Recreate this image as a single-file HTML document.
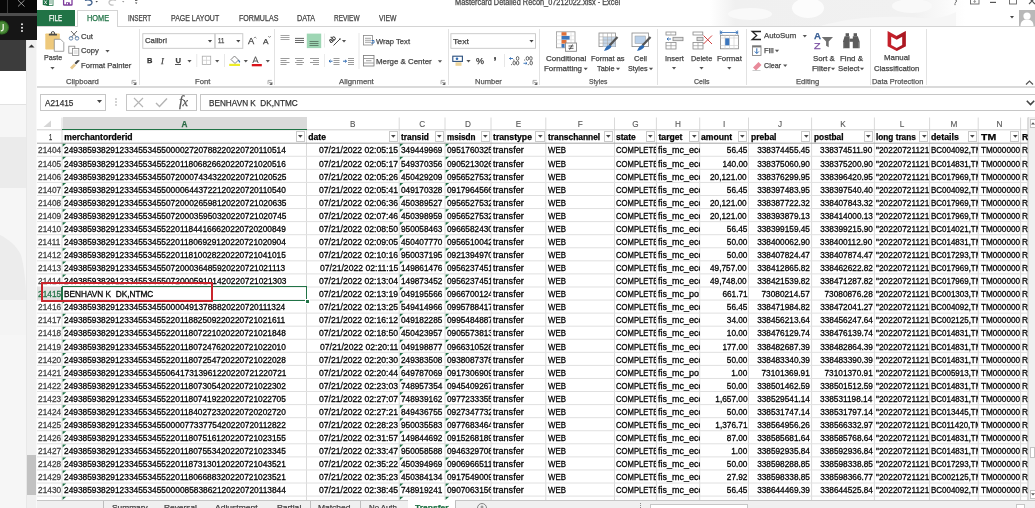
<!DOCTYPE html><html><head><meta charset="utf-8"><style>
html,body{margin:0;padding:0}
body{will-change:transform;width:1035px;height:508px;overflow:hidden;position:relative;background:#fff;font-family:"Liberation Sans",sans-serif}
.t{position:absolute;white-space:nowrap;line-height:1;transform-origin:0 0;-webkit-text-stroke:0.25px currentColor}
.a{position:absolute}
.c{position:absolute;overflow:hidden;height:13.07px}
.c span{position:absolute;white-space:nowrap;line-height:1;font-size:9.4px;transform-origin:0 0;transform:scaleX(0.881);top:2.3px;-webkit-text-stroke:0.3px currentColor}
.c span.r{transform-origin:100% 0;right:0}
</style></head><body>
<svg class="a" style="left:0;top:0" width="1035" height="508"><line x1="62" y1="117.5" x2="62" y2="500.4" stroke="#dadada" stroke-width="1"/><line x1="306.5" y1="117.5" x2="306.5" y2="500.4" stroke="#dadada" stroke-width="1"/><line x1="399.2" y1="117.5" x2="399.2" y2="500.4" stroke="#dadada" stroke-width="1"/><line x1="445" y1="117.5" x2="445" y2="500.4" stroke="#dadada" stroke-width="1"/><line x1="491" y1="117.5" x2="491" y2="500.4" stroke="#dadada" stroke-width="1"/><line x1="545.8" y1="117.5" x2="545.8" y2="500.4" stroke="#dadada" stroke-width="1"/><line x1="614.5" y1="117.5" x2="614.5" y2="500.4" stroke="#dadada" stroke-width="1"/><line x1="656.4" y1="117.5" x2="656.4" y2="500.4" stroke="#dadada" stroke-width="1"/><line x1="699.7" y1="117.5" x2="699.7" y2="500.4" stroke="#dadada" stroke-width="1"/><line x1="748.5" y1="117.5" x2="748.5" y2="500.4" stroke="#dadada" stroke-width="1"/><line x1="811.6" y1="117.5" x2="811.6" y2="500.4" stroke="#dadada" stroke-width="1"/><line x1="874.4" y1="117.5" x2="874.4" y2="500.4" stroke="#dadada" stroke-width="1"/><line x1="929.6" y1="117.5" x2="929.6" y2="500.4" stroke="#dadada" stroke-width="1"/><line x1="978.2" y1="117.5" x2="978.2" y2="500.4" stroke="#dadada" stroke-width="1"/><line x1="1020.6" y1="117.5" x2="1020.6" y2="500.4" stroke="#dadada" stroke-width="1"/><line x1="1027.6" y1="117.5" x2="1027.6" y2="500.4" stroke="#dadada" stroke-width="1"/><line x1="37" y1="129.8" x2="1027.6" y2="129.8" stroke="#d0d0d0"/><line x1="37" y1="143.2" x2="1027.6" y2="143.2" stroke="#a6a6a6"/><line x1="37" y1="156.27" x2="1027.6" y2="156.27" stroke="#e0e0e0"/><line x1="37" y1="169.34" x2="1027.6" y2="169.34" stroke="#e0e0e0"/><line x1="37" y1="182.41" x2="1027.6" y2="182.41" stroke="#e0e0e0"/><line x1="37" y1="195.48" x2="1027.6" y2="195.48" stroke="#e0e0e0"/><line x1="37" y1="208.55" x2="1027.6" y2="208.55" stroke="#e0e0e0"/><line x1="37" y1="221.62" x2="1027.6" y2="221.62" stroke="#e0e0e0"/><line x1="37" y1="234.69" x2="1027.6" y2="234.69" stroke="#e0e0e0"/><line x1="37" y1="247.76" x2="1027.6" y2="247.76" stroke="#e0e0e0"/><line x1="37" y1="260.83" x2="1027.6" y2="260.83" stroke="#e0e0e0"/><line x1="37" y1="273.9" x2="1027.6" y2="273.9" stroke="#e0e0e0"/><line x1="37" y1="286.97" x2="1027.6" y2="286.97" stroke="#e0e0e0"/><line x1="37" y1="300.04" x2="1027.6" y2="300.04" stroke="#e0e0e0"/><line x1="37" y1="313.11" x2="1027.6" y2="313.11" stroke="#e0e0e0"/><line x1="37" y1="326.18" x2="1027.6" y2="326.18" stroke="#e0e0e0"/><line x1="37" y1="339.25" x2="1027.6" y2="339.25" stroke="#e0e0e0"/><line x1="37" y1="352.32" x2="1027.6" y2="352.32" stroke="#e0e0e0"/><line x1="37" y1="365.39" x2="1027.6" y2="365.39" stroke="#e0e0e0"/><line x1="37" y1="378.46" x2="1027.6" y2="378.46" stroke="#e0e0e0"/><line x1="37" y1="391.53" x2="1027.6" y2="391.53" stroke="#e0e0e0"/><line x1="37" y1="404.6" x2="1027.6" y2="404.6" stroke="#e0e0e0"/><line x1="37" y1="417.67" x2="1027.6" y2="417.67" stroke="#e0e0e0"/><line x1="37" y1="430.74" x2="1027.6" y2="430.74" stroke="#e0e0e0"/><line x1="37" y1="443.81" x2="1027.6" y2="443.81" stroke="#e0e0e0"/><line x1="37" y1="456.88" x2="1027.6" y2="456.88" stroke="#e0e0e0"/><line x1="37" y1="469.95" x2="1027.6" y2="469.95" stroke="#e0e0e0"/><line x1="37" y1="483.02" x2="1027.6" y2="483.02" stroke="#e0e0e0"/><line x1="37" y1="496.09" x2="1027.6" y2="496.09" stroke="#e0e0e0"/></svg><div class="c" style="left:62.5px;top:143.2px;width:244px"><span style="left:1.4px;transform:scaleX(0.889)">249385938291233455345500002720788220220720110514</span></div><div class="c" style="left:307px;top:143.2px;width:92.2px"><span class="r" style="right:1.3px;transform:scaleX(0.919)">07/21/2022 02:05:15</span></div><div class="c" style="left:399.7px;top:143.2px;width:45.3px"><span style="left:1.3px">349449969</span></div><div class="c" style="left:445.5px;top:143.2px;width:45.5px"><span style="left:1.3px">0951760325</span></div><div class="c" style="left:491.5px;top:143.2px;width:54.3px"><span style="left:1.4px;transform:scaleX(0.967)">transfer</span></div><div class="c" style="left:546.3px;top:143.2px;width:68.2px"><span style="left:1.4px;transform:scaleX(0.84)">WEB</span></div><div class="c" style="left:615px;top:143.2px;width:41.4px"><span style="left:1.4px;transform:scaleX(0.82)">COMPLETED</span></div><div class="c" style="left:656.9px;top:143.2px;width:42.8px"><span style="left:1.4px;transform:scaleX(0.957)">fis_mc_eco</span></div><div class="c" style="left:700.2px;top:143.2px;width:48.3px"><span class="r" style="right:1.3px">56.45</span></div><div class="c" style="left:749px;top:143.2px;width:62.6px"><span class="r" style="right:1.8px">338374455.45</span></div><div class="c" style="left:812.1px;top:143.2px;width:62.3px"><span class="r" style="right:1.9px">338374511.90</span></div><div class="c" style="left:874.9px;top:143.2px;width:54.7px"><span style="left:1px;letter-spacing:0.05px">&quot;20220721121</span></div><div class="c" style="left:930.1px;top:143.2px;width:48.1px"><span style="left:1.4px;transform:scaleX(0.85)">BC004092,TM</span></div><div class="c" style="left:978.7px;top:143.2px;width:41.9px"><span style="left:2.2px;transform:scaleX(0.87)">TM000000</span></div><div class="c" style="left:1021.1px;top:143.2px;width:6.5px"><span style="left:1.4px">R</span></div><div class="c" style="left:62.5px;top:156.27px;width:244px"><span style="left:1.4px;transform:scaleX(0.889)">249385938291233455345522011806826620220721020516</span></div><div class="c" style="left:307px;top:156.27px;width:92.2px"><span class="r" style="right:1.3px;transform:scaleX(0.919)">07/21/2022 02:05:17</span></div><div class="c" style="left:399.7px;top:156.27px;width:45.3px"><span style="left:1.3px">549370356</span></div><div class="c" style="left:445.5px;top:156.27px;width:45.5px"><span style="left:1.3px">0905213026</span></div><div class="c" style="left:491.5px;top:156.27px;width:54.3px"><span style="left:1.4px;transform:scaleX(0.967)">transfer</span></div><div class="c" style="left:546.3px;top:156.27px;width:68.2px"><span style="left:1.4px;transform:scaleX(0.84)">WEB</span></div><div class="c" style="left:615px;top:156.27px;width:41.4px"><span style="left:1.4px;transform:scaleX(0.82)">COMPLETED</span></div><div class="c" style="left:656.9px;top:156.27px;width:42.8px"><span style="left:1.4px;transform:scaleX(0.957)">fis_mc_eco</span></div><div class="c" style="left:700.2px;top:156.27px;width:48.3px"><span class="r" style="right:1.3px">140.00</span></div><div class="c" style="left:749px;top:156.27px;width:62.6px"><span class="r" style="right:1.8px">338375060.90</span></div><div class="c" style="left:812.1px;top:156.27px;width:62.3px"><span class="r" style="right:1.9px">338375200.90</span></div><div class="c" style="left:874.9px;top:156.27px;width:54.7px"><span style="left:1px;letter-spacing:0.05px">&quot;20220721121</span></div><div class="c" style="left:930.1px;top:156.27px;width:48.1px"><span style="left:1.4px;transform:scaleX(0.85)">BC014831,TM</span></div><div class="c" style="left:978.7px;top:156.27px;width:41.9px"><span style="left:2.2px;transform:scaleX(0.87)">TM000000</span></div><div class="c" style="left:1021.1px;top:156.27px;width:6.5px"><span style="left:1.4px">R</span></div><div class="c" style="left:62.5px;top:169.34px;width:244px"><span style="left:1.4px;transform:scaleX(0.889)">249385938291233455345507200074343220220721020525</span></div><div class="c" style="left:307px;top:169.34px;width:92.2px"><span class="r" style="right:1.3px;transform:scaleX(0.919)">07/21/2022 02:05:26</span></div><div class="c" style="left:399.7px;top:169.34px;width:45.3px"><span style="left:1.3px">450429209</span></div><div class="c" style="left:445.5px;top:169.34px;width:45.5px"><span style="left:1.3px">0956527532</span></div><div class="c" style="left:491.5px;top:169.34px;width:54.3px"><span style="left:1.4px;transform:scaleX(0.967)">transfer</span></div><div class="c" style="left:546.3px;top:169.34px;width:68.2px"><span style="left:1.4px;transform:scaleX(0.84)">WEB</span></div><div class="c" style="left:615px;top:169.34px;width:41.4px"><span style="left:1.4px;transform:scaleX(0.82)">COMPLETED</span></div><div class="c" style="left:656.9px;top:169.34px;width:42.8px"><span style="left:1.4px;transform:scaleX(0.957)">fis_mc_eco</span></div><div class="c" style="left:700.2px;top:169.34px;width:48.3px"><span class="r" style="right:1.3px">20,121.00</span></div><div class="c" style="left:749px;top:169.34px;width:62.6px"><span class="r" style="right:1.8px">338376299.95</span></div><div class="c" style="left:812.1px;top:169.34px;width:62.3px"><span class="r" style="right:1.9px">338396420.95</span></div><div class="c" style="left:874.9px;top:169.34px;width:54.7px"><span style="left:1px;letter-spacing:0.05px">&quot;20220721121</span></div><div class="c" style="left:930.1px;top:169.34px;width:48.1px"><span style="left:1.4px;transform:scaleX(0.85)">BC017969,TM</span></div><div class="c" style="left:978.7px;top:169.34px;width:41.9px"><span style="left:2.2px;transform:scaleX(0.87)">TM000000</span></div><div class="c" style="left:1021.1px;top:169.34px;width:6.5px"><span style="left:1.4px">R</span></div><div class="c" style="left:62.5px;top:182.41px;width:244px"><span style="left:1.4px;transform:scaleX(0.889)">249385938291233455345500006443722120220720110540</span></div><div class="c" style="left:307px;top:182.41px;width:92.2px"><span class="r" style="right:1.3px;transform:scaleX(0.919)">07/21/2022 02:05:41</span></div><div class="c" style="left:399.7px;top:182.41px;width:45.3px"><span style="left:1.3px">049170328</span></div><div class="c" style="left:445.5px;top:182.41px;width:45.5px"><span style="left:1.3px">0917964566</span></div><div class="c" style="left:491.5px;top:182.41px;width:54.3px"><span style="left:1.4px;transform:scaleX(0.967)">transfer</span></div><div class="c" style="left:546.3px;top:182.41px;width:68.2px"><span style="left:1.4px;transform:scaleX(0.84)">WEB</span></div><div class="c" style="left:615px;top:182.41px;width:41.4px"><span style="left:1.4px;transform:scaleX(0.82)">COMPLETED</span></div><div class="c" style="left:656.9px;top:182.41px;width:42.8px"><span style="left:1.4px;transform:scaleX(0.957)">fis_mc_eco</span></div><div class="c" style="left:700.2px;top:182.41px;width:48.3px"><span class="r" style="right:1.3px">56.45</span></div><div class="c" style="left:749px;top:182.41px;width:62.6px"><span class="r" style="right:1.8px">338397483.95</span></div><div class="c" style="left:812.1px;top:182.41px;width:62.3px"><span class="r" style="right:1.9px">338397540.40</span></div><div class="c" style="left:874.9px;top:182.41px;width:54.7px"><span style="left:1px;letter-spacing:0.05px">&quot;20220721121</span></div><div class="c" style="left:930.1px;top:182.41px;width:48.1px"><span style="left:1.4px;transform:scaleX(0.85)">BC004092,TM</span></div><div class="c" style="left:978.7px;top:182.41px;width:41.9px"><span style="left:2.2px;transform:scaleX(0.87)">TM000000</span></div><div class="c" style="left:1021.1px;top:182.41px;width:6.5px"><span style="left:1.4px">R</span></div><div class="c" style="left:62.5px;top:195.48px;width:244px"><span style="left:1.4px;transform:scaleX(0.889)">249385938291233455345507200026598120220721020635</span></div><div class="c" style="left:307px;top:195.48px;width:92.2px"><span class="r" style="right:1.3px;transform:scaleX(0.919)">07/21/2022 02:06:36</span></div><div class="c" style="left:399.7px;top:195.48px;width:45.3px"><span style="left:1.3px">450389527</span></div><div class="c" style="left:445.5px;top:195.48px;width:45.5px"><span style="left:1.3px">0956527532</span></div><div class="c" style="left:491.5px;top:195.48px;width:54.3px"><span style="left:1.4px;transform:scaleX(0.967)">transfer</span></div><div class="c" style="left:546.3px;top:195.48px;width:68.2px"><span style="left:1.4px;transform:scaleX(0.84)">WEB</span></div><div class="c" style="left:615px;top:195.48px;width:41.4px"><span style="left:1.4px;transform:scaleX(0.82)">COMPLETED</span></div><div class="c" style="left:656.9px;top:195.48px;width:42.8px"><span style="left:1.4px;transform:scaleX(0.957)">fis_mc_eco</span></div><div class="c" style="left:700.2px;top:195.48px;width:48.3px"><span class="r" style="right:1.3px">20,121.00</span></div><div class="c" style="left:749px;top:195.48px;width:62.6px"><span class="r" style="right:1.8px">338387722.32</span></div><div class="c" style="left:812.1px;top:195.48px;width:62.3px"><span class="r" style="right:1.9px">338407843.32</span></div><div class="c" style="left:874.9px;top:195.48px;width:54.7px"><span style="left:1px;letter-spacing:0.05px">&quot;20220721121</span></div><div class="c" style="left:930.1px;top:195.48px;width:48.1px"><span style="left:1.4px;transform:scaleX(0.85)">BC017969,TM</span></div><div class="c" style="left:978.7px;top:195.48px;width:41.9px"><span style="left:2.2px;transform:scaleX(0.87)">TM000000</span></div><div class="c" style="left:1021.1px;top:195.48px;width:6.5px"><span style="left:1.4px">R</span></div><div class="c" style="left:62.5px;top:208.55px;width:244px"><span style="left:1.4px;transform:scaleX(0.889)">249385938291233455345507200035950320220721020745</span></div><div class="c" style="left:307px;top:208.55px;width:92.2px"><span class="r" style="right:1.3px;transform:scaleX(0.919)">07/21/2022 02:07:46</span></div><div class="c" style="left:399.7px;top:208.55px;width:45.3px"><span style="left:1.3px">450398959</span></div><div class="c" style="left:445.5px;top:208.55px;width:45.5px"><span style="left:1.3px">0956527532</span></div><div class="c" style="left:491.5px;top:208.55px;width:54.3px"><span style="left:1.4px;transform:scaleX(0.967)">transfer</span></div><div class="c" style="left:546.3px;top:208.55px;width:68.2px"><span style="left:1.4px;transform:scaleX(0.84)">WEB</span></div><div class="c" style="left:615px;top:208.55px;width:41.4px"><span style="left:1.4px;transform:scaleX(0.82)">COMPLETED</span></div><div class="c" style="left:656.9px;top:208.55px;width:42.8px"><span style="left:1.4px;transform:scaleX(0.957)">fis_mc_eco</span></div><div class="c" style="left:700.2px;top:208.55px;width:48.3px"><span class="r" style="right:1.3px">20,121.00</span></div><div class="c" style="left:749px;top:208.55px;width:62.6px"><span class="r" style="right:1.8px">338393879.13</span></div><div class="c" style="left:812.1px;top:208.55px;width:62.3px"><span class="r" style="right:1.9px">338414000.13</span></div><div class="c" style="left:874.9px;top:208.55px;width:54.7px"><span style="left:1px;letter-spacing:0.05px">&quot;20220721121</span></div><div class="c" style="left:930.1px;top:208.55px;width:48.1px"><span style="left:1.4px;transform:scaleX(0.85)">BC017969,TM</span></div><div class="c" style="left:978.7px;top:208.55px;width:41.9px"><span style="left:2.2px;transform:scaleX(0.87)">TM000000</span></div><div class="c" style="left:1021.1px;top:208.55px;width:6.5px"><span style="left:1.4px">R</span></div><div class="c" style="left:62.5px;top:221.62px;width:244px"><span style="left:1.4px;transform:scaleX(0.889)">249385938291233455345522011844166620220720200849</span></div><div class="c" style="left:307px;top:221.62px;width:92.2px"><span class="r" style="right:1.3px;transform:scaleX(0.919)">07/21/2022 02:08:50</span></div><div class="c" style="left:399.7px;top:221.62px;width:45.3px"><span style="left:1.3px">950058463</span></div><div class="c" style="left:445.5px;top:221.62px;width:45.5px"><span style="left:1.3px">0966582430</span></div><div class="c" style="left:491.5px;top:221.62px;width:54.3px"><span style="left:1.4px;transform:scaleX(0.967)">transfer</span></div><div class="c" style="left:546.3px;top:221.62px;width:68.2px"><span style="left:1.4px;transform:scaleX(0.84)">WEB</span></div><div class="c" style="left:615px;top:221.62px;width:41.4px"><span style="left:1.4px;transform:scaleX(0.82)">COMPLETED</span></div><div class="c" style="left:656.9px;top:221.62px;width:42.8px"><span style="left:1.4px;transform:scaleX(0.957)">fis_mc_eco</span></div><div class="c" style="left:700.2px;top:221.62px;width:48.3px"><span class="r" style="right:1.3px">56.45</span></div><div class="c" style="left:749px;top:221.62px;width:62.6px"><span class="r" style="right:1.8px">338399159.45</span></div><div class="c" style="left:812.1px;top:221.62px;width:62.3px"><span class="r" style="right:1.9px">338399215.90</span></div><div class="c" style="left:874.9px;top:221.62px;width:54.7px"><span style="left:1px;letter-spacing:0.05px">&quot;20220721121</span></div><div class="c" style="left:930.1px;top:221.62px;width:48.1px"><span style="left:1.4px;transform:scaleX(0.85)">BC014021,TM</span></div><div class="c" style="left:978.7px;top:221.62px;width:41.9px"><span style="left:2.2px;transform:scaleX(0.87)">TM000000</span></div><div class="c" style="left:1021.1px;top:221.62px;width:6.5px"><span style="left:1.4px">R</span></div><div class="c" style="left:62.5px;top:234.69px;width:244px"><span style="left:1.4px;transform:scaleX(0.889)">249385938291233455345522011806929120220721020904</span></div><div class="c" style="left:307px;top:234.69px;width:92.2px"><span class="r" style="right:1.3px;transform:scaleX(0.919)">07/21/2022 02:09:05</span></div><div class="c" style="left:399.7px;top:234.69px;width:45.3px"><span style="left:1.3px">450407770</span></div><div class="c" style="left:445.5px;top:234.69px;width:45.5px"><span style="left:1.3px">0956510042</span></div><div class="c" style="left:491.5px;top:234.69px;width:54.3px"><span style="left:1.4px;transform:scaleX(0.967)">transfer</span></div><div class="c" style="left:546.3px;top:234.69px;width:68.2px"><span style="left:1.4px;transform:scaleX(0.84)">WEB</span></div><div class="c" style="left:615px;top:234.69px;width:41.4px"><span style="left:1.4px;transform:scaleX(0.82)">COMPLETED</span></div><div class="c" style="left:656.9px;top:234.69px;width:42.8px"><span style="left:1.4px;transform:scaleX(0.957)">fis_mc_eco</span></div><div class="c" style="left:700.2px;top:234.69px;width:48.3px"><span class="r" style="right:1.3px">50.00</span></div><div class="c" style="left:749px;top:234.69px;width:62.6px"><span class="r" style="right:1.8px">338400062.90</span></div><div class="c" style="left:812.1px;top:234.69px;width:62.3px"><span class="r" style="right:1.9px">338400112.90</span></div><div class="c" style="left:874.9px;top:234.69px;width:54.7px"><span style="left:1px;letter-spacing:0.05px">&quot;20220721121</span></div><div class="c" style="left:930.1px;top:234.69px;width:48.1px"><span style="left:1.4px;transform:scaleX(0.85)">BC014831,TM</span></div><div class="c" style="left:978.7px;top:234.69px;width:41.9px"><span style="left:2.2px;transform:scaleX(0.87)">TM000000</span></div><div class="c" style="left:1021.1px;top:234.69px;width:6.5px"><span style="left:1.4px">R</span></div><div class="c" style="left:62.5px;top:247.76px;width:244px"><span style="left:1.4px;transform:scaleX(0.889)">249385938291233455345522011810028220220721041015</span></div><div class="c" style="left:307px;top:247.76px;width:92.2px"><span class="r" style="right:1.3px;transform:scaleX(0.919)">07/21/2022 02:10:16</span></div><div class="c" style="left:399.7px;top:247.76px;width:45.3px"><span style="left:1.3px">950037195</span></div><div class="c" style="left:445.5px;top:247.76px;width:45.5px"><span style="left:1.3px">0921394970</span></div><div class="c" style="left:491.5px;top:247.76px;width:54.3px"><span style="left:1.4px;transform:scaleX(0.967)">transfer</span></div><div class="c" style="left:546.3px;top:247.76px;width:68.2px"><span style="left:1.4px;transform:scaleX(0.84)">WEB</span></div><div class="c" style="left:615px;top:247.76px;width:41.4px"><span style="left:1.4px;transform:scaleX(0.82)">COMPLETED</span></div><div class="c" style="left:656.9px;top:247.76px;width:42.8px"><span style="left:1.4px;transform:scaleX(0.957)">fis_mc_eco</span></div><div class="c" style="left:700.2px;top:247.76px;width:48.3px"><span class="r" style="right:1.3px">50.00</span></div><div class="c" style="left:749px;top:247.76px;width:62.6px"><span class="r" style="right:1.8px">338407824.47</span></div><div class="c" style="left:812.1px;top:247.76px;width:62.3px"><span class="r" style="right:1.9px">338407874.47</span></div><div class="c" style="left:874.9px;top:247.76px;width:54.7px"><span style="left:1px;letter-spacing:0.05px">&quot;20220721121</span></div><div class="c" style="left:930.1px;top:247.76px;width:48.1px"><span style="left:1.4px;transform:scaleX(0.85)">BC017293,TM</span></div><div class="c" style="left:978.7px;top:247.76px;width:41.9px"><span style="left:2.2px;transform:scaleX(0.87)">TM000000</span></div><div class="c" style="left:1021.1px;top:247.76px;width:6.5px"><span style="left:1.4px">R</span></div><div class="c" style="left:62.5px;top:260.83px;width:244px"><span style="left:1.4px;transform:scaleX(0.889)">249385938291233455345507200036485920220721021113</span></div><div class="c" style="left:307px;top:260.83px;width:92.2px"><span class="r" style="right:1.3px;transform:scaleX(0.919)">07/21/2022 02:11:15</span></div><div class="c" style="left:399.7px;top:260.83px;width:45.3px"><span style="left:1.3px">149861476</span></div><div class="c" style="left:445.5px;top:260.83px;width:45.5px"><span style="left:1.3px">0956237451</span></div><div class="c" style="left:491.5px;top:260.83px;width:54.3px"><span style="left:1.4px;transform:scaleX(0.967)">transfer</span></div><div class="c" style="left:546.3px;top:260.83px;width:68.2px"><span style="left:1.4px;transform:scaleX(0.84)">WEB</span></div><div class="c" style="left:615px;top:260.83px;width:41.4px"><span style="left:1.4px;transform:scaleX(0.82)">COMPLETED</span></div><div class="c" style="left:656.9px;top:260.83px;width:42.8px"><span style="left:1.4px;transform:scaleX(0.957)">fis_mc_eco</span></div><div class="c" style="left:700.2px;top:260.83px;width:48.3px"><span class="r" style="right:1.3px">49,757.00</span></div><div class="c" style="left:749px;top:260.83px;width:62.6px"><span class="r" style="right:1.8px">338412865.82</span></div><div class="c" style="left:812.1px;top:260.83px;width:62.3px"><span class="r" style="right:1.9px">338462622.82</span></div><div class="c" style="left:874.9px;top:260.83px;width:54.7px"><span style="left:1px;letter-spacing:0.05px">&quot;20220721121</span></div><div class="c" style="left:930.1px;top:260.83px;width:48.1px"><span style="left:1.4px;transform:scaleX(0.85)">BC017969,TM</span></div><div class="c" style="left:978.7px;top:260.83px;width:41.9px"><span style="left:2.2px;transform:scaleX(0.87)">TM000000</span></div><div class="c" style="left:1021.1px;top:260.83px;width:6.5px"><span style="left:1.4px">R</span></div><div class="c" style="left:62.5px;top:273.9px;width:244px"><span style="left:1.4px;transform:scaleX(0.889)">249385938291233455345507200059101420220721021303</span></div><div class="c" style="left:307px;top:273.9px;width:92.2px"><span class="r" style="right:1.3px;transform:scaleX(0.919)">07/21/2022 02:13:04</span></div><div class="c" style="left:399.7px;top:273.9px;width:45.3px"><span style="left:1.3px">149873452</span></div><div class="c" style="left:445.5px;top:273.9px;width:45.5px"><span style="left:1.3px">0956237451</span></div><div class="c" style="left:491.5px;top:273.9px;width:54.3px"><span style="left:1.4px;transform:scaleX(0.967)">transfer</span></div><div class="c" style="left:546.3px;top:273.9px;width:68.2px"><span style="left:1.4px;transform:scaleX(0.84)">WEB</span></div><div class="c" style="left:615px;top:273.9px;width:41.4px"><span style="left:1.4px;transform:scaleX(0.82)">COMPLETED</span></div><div class="c" style="left:656.9px;top:273.9px;width:42.8px"><span style="left:1.4px;transform:scaleX(0.957)">fis_mc_eco</span></div><div class="c" style="left:700.2px;top:273.9px;width:48.3px"><span class="r" style="right:1.3px">49,748.00</span></div><div class="c" style="left:749px;top:273.9px;width:62.6px"><span class="r" style="right:1.8px">338421539.82</span></div><div class="c" style="left:812.1px;top:273.9px;width:62.3px"><span class="r" style="right:1.9px">338471287.82</span></div><div class="c" style="left:874.9px;top:273.9px;width:54.7px"><span style="left:1px;letter-spacing:0.05px">&quot;20220721121</span></div><div class="c" style="left:930.1px;top:273.9px;width:48.1px"><span style="left:1.4px;transform:scaleX(0.85)">BC017969,TM</span></div><div class="c" style="left:978.7px;top:273.9px;width:41.9px"><span style="left:2.2px;transform:scaleX(0.87)">TM000000</span></div><div class="c" style="left:1021.1px;top:273.9px;width:6.5px"><span style="left:1.4px">R</span></div><div class="c" style="left:62.5px;top:286.97px;width:244px"><span style="left:1.5px;white-space:pre">BENHAVN K  DK,NTMC</span></div><div class="c" style="left:307px;top:286.97px;width:92.2px"><span class="r" style="right:1.3px;transform:scaleX(0.919)">07/21/2022 02:13:19</span></div><div class="c" style="left:399.7px;top:286.97px;width:45.3px"><span style="left:1.3px">049195566</span></div><div class="c" style="left:445.5px;top:286.97px;width:45.5px"><span style="left:1.3px">0966700124</span></div><div class="c" style="left:491.5px;top:286.97px;width:54.3px"><span style="left:1.4px;transform:scaleX(0.967)">transfer</span></div><div class="c" style="left:546.3px;top:286.97px;width:68.2px"><span style="left:1.4px;transform:scaleX(0.84)">WEB</span></div><div class="c" style="left:615px;top:286.97px;width:41.4px"><span style="left:1.4px;transform:scaleX(0.82)">COMPLETED</span></div><div class="c" style="left:656.9px;top:286.97px;width:42.8px"><span style="left:1.4px;transform:scaleX(0.957)">fis_mc_po</span></div><div class="c" style="left:700.2px;top:286.97px;width:48.3px"><span class="r" style="right:1.3px">661.71</span></div><div class="c" style="left:749px;top:286.97px;width:62.6px"><span class="r" style="right:1.8px">73080214.57</span></div><div class="c" style="left:812.1px;top:286.97px;width:62.3px"><span class="r" style="right:1.9px">73080876.28</span></div><div class="c" style="left:874.9px;top:286.97px;width:54.7px"><span style="left:1px;letter-spacing:0.05px">&quot;20220721121</span></div><div class="c" style="left:930.1px;top:286.97px;width:48.1px"><span style="left:1.4px;transform:scaleX(0.85)">BC001303,TM</span></div><div class="c" style="left:978.7px;top:286.97px;width:41.9px"><span style="left:2.2px;transform:scaleX(0.87)">TM000000</span></div><div class="c" style="left:1021.1px;top:286.97px;width:6.5px"><span style="left:1.4px">R</span></div><div class="c" style="left:62.5px;top:300.04px;width:244px"><span style="left:1.4px;transform:scaleX(0.889)">249385938291233455345500004913788820220720111324</span></div><div class="c" style="left:307px;top:300.04px;width:92.2px"><span class="r" style="right:1.3px;transform:scaleX(0.919)">07/21/2022 02:13:25</span></div><div class="c" style="left:399.7px;top:300.04px;width:45.3px"><span style="left:1.3px">549414966</span></div><div class="c" style="left:445.5px;top:300.04px;width:45.5px"><span style="left:1.3px">0995788417</span></div><div class="c" style="left:491.5px;top:300.04px;width:54.3px"><span style="left:1.4px;transform:scaleX(0.967)">transfer</span></div><div class="c" style="left:546.3px;top:300.04px;width:68.2px"><span style="left:1.4px;transform:scaleX(0.84)">WEB</span></div><div class="c" style="left:615px;top:300.04px;width:41.4px"><span style="left:1.4px;transform:scaleX(0.82)">COMPLETED</span></div><div class="c" style="left:656.9px;top:300.04px;width:42.8px"><span style="left:1.4px;transform:scaleX(0.957)">fis_mc_eco</span></div><div class="c" style="left:700.2px;top:300.04px;width:48.3px"><span class="r" style="right:1.3px">56.45</span></div><div class="c" style="left:749px;top:300.04px;width:62.6px"><span class="r" style="right:1.8px">338471984.82</span></div><div class="c" style="left:812.1px;top:300.04px;width:62.3px"><span class="r" style="right:1.9px">338472041.27</span></div><div class="c" style="left:874.9px;top:300.04px;width:54.7px"><span style="left:1px;letter-spacing:0.05px">&quot;20220721121</span></div><div class="c" style="left:930.1px;top:300.04px;width:48.1px"><span style="left:1.4px;transform:scaleX(0.85)">BC004092,TM</span></div><div class="c" style="left:978.7px;top:300.04px;width:41.9px"><span style="left:2.2px;transform:scaleX(0.87)">TM000000</span></div><div class="c" style="left:1021.1px;top:300.04px;width:6.5px"><span style="left:1.4px">R</span></div><div class="c" style="left:62.5px;top:313.11px;width:244px"><span style="left:1.4px;transform:scaleX(0.889)">249385938291233455345522011882509220220721021611</span></div><div class="c" style="left:307px;top:313.11px;width:92.2px"><span class="r" style="right:1.3px;transform:scaleX(0.919)">07/21/2022 02:16:12</span></div><div class="c" style="left:399.7px;top:313.11px;width:45.3px"><span style="left:1.3px">049182285</span></div><div class="c" style="left:445.5px;top:313.11px;width:45.5px"><span style="left:1.3px">0995484887</span></div><div class="c" style="left:491.5px;top:313.11px;width:54.3px"><span style="left:1.4px;transform:scaleX(0.967)">transfer</span></div><div class="c" style="left:546.3px;top:313.11px;width:68.2px"><span style="left:1.4px;transform:scaleX(0.84)">WEB</span></div><div class="c" style="left:615px;top:313.11px;width:41.4px"><span style="left:1.4px;transform:scaleX(0.82)">COMPLETED</span></div><div class="c" style="left:656.9px;top:313.11px;width:42.8px"><span style="left:1.4px;transform:scaleX(0.957)">fis_mc_eco</span></div><div class="c" style="left:700.2px;top:313.11px;width:48.3px"><span class="r" style="right:1.3px">34.00</span></div><div class="c" style="left:749px;top:313.11px;width:62.6px"><span class="r" style="right:1.8px">338456213.64</span></div><div class="c" style="left:812.1px;top:313.11px;width:62.3px"><span class="r" style="right:1.9px">338456247.64</span></div><div class="c" style="left:874.9px;top:313.11px;width:54.7px"><span style="left:1px;letter-spacing:0.05px">&quot;20220721121</span></div><div class="c" style="left:930.1px;top:313.11px;width:48.1px"><span style="left:1.4px;transform:scaleX(0.85)">BC002125,TM</span></div><div class="c" style="left:978.7px;top:313.11px;width:41.9px"><span style="left:2.2px;transform:scaleX(0.87)">TM000000</span></div><div class="c" style="left:1021.1px;top:313.11px;width:6.5px"><span style="left:1.4px">R</span></div><div class="c" style="left:62.5px;top:326.18px;width:244px"><span style="left:1.4px;transform:scaleX(0.889)">249385938291233455345522011807221020220721021848</span></div><div class="c" style="left:307px;top:326.18px;width:92.2px"><span class="r" style="right:1.3px;transform:scaleX(0.919)">07/21/2022 02:18:50</span></div><div class="c" style="left:399.7px;top:326.18px;width:45.3px"><span style="left:1.3px">450423957</span></div><div class="c" style="left:445.5px;top:326.18px;width:45.5px"><span style="left:1.3px">0905573813</span></div><div class="c" style="left:491.5px;top:326.18px;width:54.3px"><span style="left:1.4px;transform:scaleX(0.967)">transfer</span></div><div class="c" style="left:546.3px;top:326.18px;width:68.2px"><span style="left:1.4px;transform:scaleX(0.84)">WEB</span></div><div class="c" style="left:615px;top:326.18px;width:41.4px"><span style="left:1.4px;transform:scaleX(0.82)">COMPLETED</span></div><div class="c" style="left:656.9px;top:326.18px;width:42.8px"><span style="left:1.4px;transform:scaleX(0.957)">fis_mc_eco</span></div><div class="c" style="left:700.2px;top:326.18px;width:48.3px"><span class="r" style="right:1.3px">10.00</span></div><div class="c" style="left:749px;top:326.18px;width:62.6px"><span class="r" style="right:1.8px">338476129.74</span></div><div class="c" style="left:812.1px;top:326.18px;width:62.3px"><span class="r" style="right:1.9px">338476139.74</span></div><div class="c" style="left:874.9px;top:326.18px;width:54.7px"><span style="left:1px;letter-spacing:0.05px">&quot;20220721121</span></div><div class="c" style="left:930.1px;top:326.18px;width:48.1px"><span style="left:1.4px;transform:scaleX(0.85)">BC014831,TM</span></div><div class="c" style="left:978.7px;top:326.18px;width:41.9px"><span style="left:2.2px;transform:scaleX(0.87)">TM000000</span></div><div class="c" style="left:1021.1px;top:326.18px;width:6.5px"><span style="left:1.4px">R</span></div><div class="c" style="left:62.5px;top:339.25px;width:244px"><span style="left:1.4px;transform:scaleX(0.889)">249385938291233455345522011807247620220721022010</span></div><div class="c" style="left:307px;top:339.25px;width:92.2px"><span class="r" style="right:1.3px;transform:scaleX(0.919)">07/21/2022 02:20:11</span></div><div class="c" style="left:399.7px;top:339.25px;width:45.3px"><span style="left:1.3px">049198877</span></div><div class="c" style="left:445.5px;top:339.25px;width:45.5px"><span style="left:1.3px">0966310528</span></div><div class="c" style="left:491.5px;top:339.25px;width:54.3px"><span style="left:1.4px;transform:scaleX(0.967)">transfer</span></div><div class="c" style="left:546.3px;top:339.25px;width:68.2px"><span style="left:1.4px;transform:scaleX(0.84)">WEB</span></div><div class="c" style="left:615px;top:339.25px;width:41.4px"><span style="left:1.4px;transform:scaleX(0.82)">COMPLETED</span></div><div class="c" style="left:656.9px;top:339.25px;width:42.8px"><span style="left:1.4px;transform:scaleX(0.957)">fis_mc_eco</span></div><div class="c" style="left:700.2px;top:339.25px;width:48.3px"><span class="r" style="right:1.3px">177.00</span></div><div class="c" style="left:749px;top:339.25px;width:62.6px"><span class="r" style="right:1.8px">338482687.39</span></div><div class="c" style="left:812.1px;top:339.25px;width:62.3px"><span class="r" style="right:1.9px">338482864.39</span></div><div class="c" style="left:874.9px;top:339.25px;width:54.7px"><span style="left:1px;letter-spacing:0.05px">&quot;20220721121</span></div><div class="c" style="left:930.1px;top:339.25px;width:48.1px"><span style="left:1.4px;transform:scaleX(0.85)">BC014831,TM</span></div><div class="c" style="left:978.7px;top:339.25px;width:41.9px"><span style="left:2.2px;transform:scaleX(0.87)">TM000000</span></div><div class="c" style="left:1021.1px;top:339.25px;width:6.5px"><span style="left:1.4px">R</span></div><div class="c" style="left:62.5px;top:352.32px;width:244px"><span style="left:1.4px;transform:scaleX(0.889)">249385938291233455345522011807254720220721022028</span></div><div class="c" style="left:307px;top:352.32px;width:92.2px"><span class="r" style="right:1.3px;transform:scaleX(0.919)">07/21/2022 02:20:30</span></div><div class="c" style="left:399.7px;top:352.32px;width:45.3px"><span style="left:1.3px">249383508</span></div><div class="c" style="left:445.5px;top:352.32px;width:45.5px"><span style="left:1.3px">0938087378</span></div><div class="c" style="left:491.5px;top:352.32px;width:54.3px"><span style="left:1.4px;transform:scaleX(0.967)">transfer</span></div><div class="c" style="left:546.3px;top:352.32px;width:68.2px"><span style="left:1.4px;transform:scaleX(0.84)">WEB</span></div><div class="c" style="left:615px;top:352.32px;width:41.4px"><span style="left:1.4px;transform:scaleX(0.82)">COMPLETED</span></div><div class="c" style="left:656.9px;top:352.32px;width:42.8px"><span style="left:1.4px;transform:scaleX(0.957)">fis_mc_eco</span></div><div class="c" style="left:700.2px;top:352.32px;width:48.3px"><span class="r" style="right:1.3px">50.00</span></div><div class="c" style="left:749px;top:352.32px;width:62.6px"><span class="r" style="right:1.8px">338483340.39</span></div><div class="c" style="left:812.1px;top:352.32px;width:62.3px"><span class="r" style="right:1.9px">338483390.39</span></div><div class="c" style="left:874.9px;top:352.32px;width:54.7px"><span style="left:1px;letter-spacing:0.05px">&quot;20220721121</span></div><div class="c" style="left:930.1px;top:352.32px;width:48.1px"><span style="left:1.4px;transform:scaleX(0.85)">BC014831,TM</span></div><div class="c" style="left:978.7px;top:352.32px;width:41.9px"><span style="left:2.2px;transform:scaleX(0.87)">TM000000</span></div><div class="c" style="left:1021.1px;top:352.32px;width:6.5px"><span style="left:1.4px">R</span></div><div class="c" style="left:62.5px;top:365.39px;width:244px"><span style="left:1.4px;transform:scaleX(0.889)">249385938291233455345506417313961220220721220721</span></div><div class="c" style="left:307px;top:365.39px;width:92.2px"><span class="r" style="right:1.3px;transform:scaleX(0.919)">07/21/2022 02:20:44</span></div><div class="c" style="left:399.7px;top:365.39px;width:45.3px"><span style="left:1.3px">649787069</span></div><div class="c" style="left:445.5px;top:365.39px;width:45.5px"><span style="left:1.3px">0917306909</span></div><div class="c" style="left:491.5px;top:365.39px;width:54.3px"><span style="left:1.4px;transform:scaleX(0.967)">transfer</span></div><div class="c" style="left:546.3px;top:365.39px;width:68.2px"><span style="left:1.4px;transform:scaleX(0.84)">WEB</span></div><div class="c" style="left:615px;top:365.39px;width:41.4px"><span style="left:1.4px;transform:scaleX(0.82)">COMPLETED</span></div><div class="c" style="left:656.9px;top:365.39px;width:42.8px"><span style="left:1.4px;transform:scaleX(0.957)">fis_mc_po</span></div><div class="c" style="left:700.2px;top:365.39px;width:48.3px"><span class="r" style="right:1.3px">1.00</span></div><div class="c" style="left:749px;top:365.39px;width:62.6px"><span class="r" style="right:1.8px">73101369.91</span></div><div class="c" style="left:812.1px;top:365.39px;width:62.3px"><span class="r" style="right:1.9px">73101370.91</span></div><div class="c" style="left:874.9px;top:365.39px;width:54.7px"><span style="left:1px;letter-spacing:0.05px">&quot;20220721121</span></div><div class="c" style="left:930.1px;top:365.39px;width:48.1px"><span style="left:1.4px;transform:scaleX(0.85)">BC005913,TM</span></div><div class="c" style="left:978.7px;top:365.39px;width:41.9px"><span style="left:2.2px;transform:scaleX(0.87)">TM000000</span></div><div class="c" style="left:1021.1px;top:365.39px;width:6.5px"><span style="left:1.4px">R</span></div><div class="c" style="left:62.5px;top:378.46px;width:244px"><span style="left:1.4px;transform:scaleX(0.889)">249385938291233455345522011807305420220721022302</span></div><div class="c" style="left:307px;top:378.46px;width:92.2px"><span class="r" style="right:1.3px;transform:scaleX(0.919)">07/21/2022 02:23:03</span></div><div class="c" style="left:399.7px;top:378.46px;width:45.3px"><span style="left:1.3px">748957354</span></div><div class="c" style="left:445.5px;top:378.46px;width:45.5px"><span style="left:1.3px">0945409267</span></div><div class="c" style="left:491.5px;top:378.46px;width:54.3px"><span style="left:1.4px;transform:scaleX(0.967)">transfer</span></div><div class="c" style="left:546.3px;top:378.46px;width:68.2px"><span style="left:1.4px;transform:scaleX(0.84)">WEB</span></div><div class="c" style="left:615px;top:378.46px;width:41.4px"><span style="left:1.4px;transform:scaleX(0.82)">COMPLETED</span></div><div class="c" style="left:656.9px;top:378.46px;width:42.8px"><span style="left:1.4px;transform:scaleX(0.957)">fis_mc_eco</span></div><div class="c" style="left:700.2px;top:378.46px;width:48.3px"><span class="r" style="right:1.3px">50.00</span></div><div class="c" style="left:749px;top:378.46px;width:62.6px"><span class="r" style="right:1.8px">338501462.59</span></div><div class="c" style="left:812.1px;top:378.46px;width:62.3px"><span class="r" style="right:1.9px">338501512.59</span></div><div class="c" style="left:874.9px;top:378.46px;width:54.7px"><span style="left:1px;letter-spacing:0.05px">&quot;20220721121</span></div><div class="c" style="left:930.1px;top:378.46px;width:48.1px"><span style="left:1.4px;transform:scaleX(0.85)">BC014831,TM</span></div><div class="c" style="left:978.7px;top:378.46px;width:41.9px"><span style="left:2.2px;transform:scaleX(0.87)">TM000000</span></div><div class="c" style="left:1021.1px;top:378.46px;width:6.5px"><span style="left:1.4px">R</span></div><div class="c" style="left:62.5px;top:391.53px;width:244px"><span style="left:1.4px;transform:scaleX(0.889)">249385938291233455345522011807419220220721022705</span></div><div class="c" style="left:307px;top:391.53px;width:92.2px"><span class="r" style="right:1.3px;transform:scaleX(0.919)">07/21/2022 02:27:07</span></div><div class="c" style="left:399.7px;top:391.53px;width:45.3px"><span style="left:1.3px">748939162</span></div><div class="c" style="left:445.5px;top:391.53px;width:45.5px"><span style="left:1.3px">0977233355</span></div><div class="c" style="left:491.5px;top:391.53px;width:54.3px"><span style="left:1.4px;transform:scaleX(0.967)">transfer</span></div><div class="c" style="left:546.3px;top:391.53px;width:68.2px"><span style="left:1.4px;transform:scaleX(0.84)">WEB</span></div><div class="c" style="left:615px;top:391.53px;width:41.4px"><span style="left:1.4px;transform:scaleX(0.82)">COMPLETED</span></div><div class="c" style="left:656.9px;top:391.53px;width:42.8px"><span style="left:1.4px;transform:scaleX(0.957)">fis_mc_eco</span></div><div class="c" style="left:700.2px;top:391.53px;width:48.3px"><span class="r" style="right:1.3px">1,657.00</span></div><div class="c" style="left:749px;top:391.53px;width:62.6px"><span class="r" style="right:1.8px">338529541.14</span></div><div class="c" style="left:812.1px;top:391.53px;width:62.3px"><span class="r" style="right:1.9px">338531198.14</span></div><div class="c" style="left:874.9px;top:391.53px;width:54.7px"><span style="left:1px;letter-spacing:0.05px">&quot;20220721121</span></div><div class="c" style="left:930.1px;top:391.53px;width:48.1px"><span style="left:1.4px;transform:scaleX(0.85)">BC014831,TM</span></div><div class="c" style="left:978.7px;top:391.53px;width:41.9px"><span style="left:2.2px;transform:scaleX(0.87)">TM000000</span></div><div class="c" style="left:1021.1px;top:391.53px;width:6.5px"><span style="left:1.4px">R</span></div><div class="c" style="left:62.5px;top:404.6px;width:244px"><span style="left:1.4px;transform:scaleX(0.889)">249385938291233455345522011840272320220720202720</span></div><div class="c" style="left:307px;top:404.6px;width:92.2px"><span class="r" style="right:1.3px;transform:scaleX(0.919)">07/21/2022 02:27:21</span></div><div class="c" style="left:399.7px;top:404.6px;width:45.3px"><span style="left:1.3px">849436755</span></div><div class="c" style="left:445.5px;top:404.6px;width:45.5px"><span style="left:1.3px">0927347732</span></div><div class="c" style="left:491.5px;top:404.6px;width:54.3px"><span style="left:1.4px;transform:scaleX(0.967)">transfer</span></div><div class="c" style="left:546.3px;top:404.6px;width:68.2px"><span style="left:1.4px;transform:scaleX(0.84)">WEB</span></div><div class="c" style="left:615px;top:404.6px;width:41.4px"><span style="left:1.4px;transform:scaleX(0.82)">COMPLETED</span></div><div class="c" style="left:656.9px;top:404.6px;width:42.8px"><span style="left:1.4px;transform:scaleX(0.957)">fis_mc_eco</span></div><div class="c" style="left:700.2px;top:404.6px;width:48.3px"><span class="r" style="right:1.3px">50.00</span></div><div class="c" style="left:749px;top:404.6px;width:62.6px"><span class="r" style="right:1.8px">338531747.14</span></div><div class="c" style="left:812.1px;top:404.6px;width:62.3px"><span class="r" style="right:1.9px">338531797.14</span></div><div class="c" style="left:874.9px;top:404.6px;width:54.7px"><span style="left:1px;letter-spacing:0.05px">&quot;20220721121</span></div><div class="c" style="left:930.1px;top:404.6px;width:48.1px"><span style="left:1.4px;transform:scaleX(0.85)">BC013445,TM</span></div><div class="c" style="left:978.7px;top:404.6px;width:41.9px"><span style="left:2.2px;transform:scaleX(0.87)">TM000000</span></div><div class="c" style="left:1021.1px;top:404.6px;width:6.5px"><span style="left:1.4px">R</span></div><div class="c" style="left:62.5px;top:417.67px;width:244px"><span style="left:1.4px;transform:scaleX(0.889)">249385938291233455345500007733775420220720112822</span></div><div class="c" style="left:307px;top:417.67px;width:92.2px"><span class="r" style="right:1.3px;transform:scaleX(0.919)">07/21/2022 02:28:23</span></div><div class="c" style="left:399.7px;top:417.67px;width:45.3px"><span style="left:1.3px">950035583</span></div><div class="c" style="left:445.5px;top:417.67px;width:45.5px"><span style="left:1.3px">0977683464</span></div><div class="c" style="left:491.5px;top:417.67px;width:54.3px"><span style="left:1.4px;transform:scaleX(0.967)">transfer</span></div><div class="c" style="left:546.3px;top:417.67px;width:68.2px"><span style="left:1.4px;transform:scaleX(0.84)">WEB</span></div><div class="c" style="left:615px;top:417.67px;width:41.4px"><span style="left:1.4px;transform:scaleX(0.82)">COMPLETED</span></div><div class="c" style="left:656.9px;top:417.67px;width:42.8px"><span style="left:1.4px;transform:scaleX(0.957)">fis_mc_eco</span></div><div class="c" style="left:700.2px;top:417.67px;width:48.3px"><span class="r" style="right:1.3px">1,376.71</span></div><div class="c" style="left:749px;top:417.67px;width:62.6px"><span class="r" style="right:1.8px">338564956.26</span></div><div class="c" style="left:812.1px;top:417.67px;width:62.3px"><span class="r" style="right:1.9px">338566332.97</span></div><div class="c" style="left:874.9px;top:417.67px;width:54.7px"><span style="left:1px;letter-spacing:0.05px">&quot;20220721121</span></div><div class="c" style="left:930.1px;top:417.67px;width:48.1px"><span style="left:1.4px;transform:scaleX(0.85)">BC011420,TM</span></div><div class="c" style="left:978.7px;top:417.67px;width:41.9px"><span style="left:2.2px;transform:scaleX(0.87)">TM000000</span></div><div class="c" style="left:1021.1px;top:417.67px;width:6.5px"><span style="left:1.4px">R</span></div><div class="c" style="left:62.5px;top:430.74px;width:244px"><span style="left:1.4px;transform:scaleX(0.889)">249385938291233455345522011807516120220721023155</span></div><div class="c" style="left:307px;top:430.74px;width:92.2px"><span class="r" style="right:1.3px;transform:scaleX(0.919)">07/21/2022 02:31:57</span></div><div class="c" style="left:399.7px;top:430.74px;width:45.3px"><span style="left:1.3px">149844692</span></div><div class="c" style="left:445.5px;top:430.74px;width:45.5px"><span style="left:1.3px">0915268189</span></div><div class="c" style="left:491.5px;top:430.74px;width:54.3px"><span style="left:1.4px;transform:scaleX(0.967)">transfer</span></div><div class="c" style="left:546.3px;top:430.74px;width:68.2px"><span style="left:1.4px;transform:scaleX(0.84)">WEB</span></div><div class="c" style="left:615px;top:430.74px;width:41.4px"><span style="left:1.4px;transform:scaleX(0.82)">COMPLETED</span></div><div class="c" style="left:656.9px;top:430.74px;width:42.8px"><span style="left:1.4px;transform:scaleX(0.957)">fis_mc_eco</span></div><div class="c" style="left:700.2px;top:430.74px;width:48.3px"><span class="r" style="right:1.3px">87.00</span></div><div class="c" style="left:749px;top:430.74px;width:62.6px"><span class="r" style="right:1.8px">338585681.64</span></div><div class="c" style="left:812.1px;top:430.74px;width:62.3px"><span class="r" style="right:1.9px">338585768.64</span></div><div class="c" style="left:874.9px;top:430.74px;width:54.7px"><span style="left:1px;letter-spacing:0.05px">&quot;20220721121</span></div><div class="c" style="left:930.1px;top:430.74px;width:48.1px"><span style="left:1.4px;transform:scaleX(0.85)">BC014831,TM</span></div><div class="c" style="left:978.7px;top:430.74px;width:41.9px"><span style="left:2.2px;transform:scaleX(0.87)">TM000000</span></div><div class="c" style="left:1021.1px;top:430.74px;width:6.5px"><span style="left:1.4px">R</span></div><div class="c" style="left:62.5px;top:443.81px;width:244px"><span style="left:1.4px;transform:scaleX(0.889)">249385938291233455345522011807553420220721023345</span></div><div class="c" style="left:307px;top:443.81px;width:92.2px"><span class="r" style="right:1.3px;transform:scaleX(0.919)">07/21/2022 02:33:47</span></div><div class="c" style="left:399.7px;top:443.81px;width:45.3px"><span style="left:1.3px">950058588</span></div><div class="c" style="left:445.5px;top:443.81px;width:45.5px"><span style="left:1.3px">0946329708</span></div><div class="c" style="left:491.5px;top:443.81px;width:54.3px"><span style="left:1.4px;transform:scaleX(0.967)">transfer</span></div><div class="c" style="left:546.3px;top:443.81px;width:68.2px"><span style="left:1.4px;transform:scaleX(0.84)">WEB</span></div><div class="c" style="left:615px;top:443.81px;width:41.4px"><span style="left:1.4px;transform:scaleX(0.82)">COMPLETED</span></div><div class="c" style="left:656.9px;top:443.81px;width:42.8px"><span style="left:1.4px;transform:scaleX(0.957)">fis_mc_eco</span></div><div class="c" style="left:700.2px;top:443.81px;width:48.3px"><span class="r" style="right:1.3px">1.00</span></div><div class="c" style="left:749px;top:443.81px;width:62.6px"><span class="r" style="right:1.8px">338592935.84</span></div><div class="c" style="left:812.1px;top:443.81px;width:62.3px"><span class="r" style="right:1.9px">338592936.84</span></div><div class="c" style="left:874.9px;top:443.81px;width:54.7px"><span style="left:1px;letter-spacing:0.05px">&quot;20220721121</span></div><div class="c" style="left:930.1px;top:443.81px;width:48.1px"><span style="left:1.4px;transform:scaleX(0.85)">BC014831,TM</span></div><div class="c" style="left:978.7px;top:443.81px;width:41.9px"><span style="left:2.2px;transform:scaleX(0.87)">TM000000</span></div><div class="c" style="left:1021.1px;top:443.81px;width:6.5px"><span style="left:1.4px">R</span></div><div class="c" style="left:62.5px;top:456.88px;width:244px"><span style="left:1.4px;transform:scaleX(0.889)">249385938291233455345522011873130120220721043521</span></div><div class="c" style="left:307px;top:456.88px;width:92.2px"><span class="r" style="right:1.3px;transform:scaleX(0.919)">07/21/2022 02:35:22</span></div><div class="c" style="left:399.7px;top:456.88px;width:45.3px"><span style="left:1.3px">450394969</span></div><div class="c" style="left:445.5px;top:456.88px;width:45.5px"><span style="left:1.3px">0906966511</span></div><div class="c" style="left:491.5px;top:456.88px;width:54.3px"><span style="left:1.4px;transform:scaleX(0.967)">transfer</span></div><div class="c" style="left:546.3px;top:456.88px;width:68.2px"><span style="left:1.4px;transform:scaleX(0.84)">WEB</span></div><div class="c" style="left:615px;top:456.88px;width:41.4px"><span style="left:1.4px;transform:scaleX(0.82)">COMPLETED</span></div><div class="c" style="left:656.9px;top:456.88px;width:42.8px"><span style="left:1.4px;transform:scaleX(0.957)">fis_mc_eco</span></div><div class="c" style="left:700.2px;top:456.88px;width:48.3px"><span class="r" style="right:1.3px">50.00</span></div><div class="c" style="left:749px;top:456.88px;width:62.6px"><span class="r" style="right:1.8px">338598288.85</span></div><div class="c" style="left:812.1px;top:456.88px;width:62.3px"><span class="r" style="right:1.9px">338598338.85</span></div><div class="c" style="left:874.9px;top:456.88px;width:54.7px"><span style="left:1px;letter-spacing:0.05px">&quot;20220721121</span></div><div class="c" style="left:930.1px;top:456.88px;width:48.1px"><span style="left:1.4px;transform:scaleX(0.85)">BC017293,TM</span></div><div class="c" style="left:978.7px;top:456.88px;width:41.9px"><span style="left:2.2px;transform:scaleX(0.87)">TM000000</span></div><div class="c" style="left:1021.1px;top:456.88px;width:6.5px"><span style="left:1.4px">R</span></div><div class="c" style="left:62.5px;top:469.95px;width:244px"><span style="left:1.4px;transform:scaleX(0.889)">249385938291233455345522011806688320220721023521</span></div><div class="c" style="left:307px;top:469.95px;width:92.2px"><span class="r" style="right:1.3px;transform:scaleX(0.919)">07/21/2022 02:35:23</span></div><div class="c" style="left:399.7px;top:469.95px;width:45.3px"><span style="left:1.3px">450384134</span></div><div class="c" style="left:445.5px;top:469.95px;width:45.5px"><span style="left:1.3px">0917549009</span></div><div class="c" style="left:491.5px;top:469.95px;width:54.3px"><span style="left:1.4px;transform:scaleX(0.967)">transfer</span></div><div class="c" style="left:546.3px;top:469.95px;width:68.2px"><span style="left:1.4px;transform:scaleX(0.84)">WEB</span></div><div class="c" style="left:615px;top:469.95px;width:41.4px"><span style="left:1.4px;transform:scaleX(0.82)">COMPLETED</span></div><div class="c" style="left:656.9px;top:469.95px;width:42.8px"><span style="left:1.4px;transform:scaleX(0.957)">fis_mc_eco</span></div><div class="c" style="left:700.2px;top:469.95px;width:48.3px"><span class="r" style="right:1.3px">27.92</span></div><div class="c" style="left:749px;top:469.95px;width:62.6px"><span class="r" style="right:1.8px">338598338.85</span></div><div class="c" style="left:812.1px;top:469.95px;width:62.3px"><span class="r" style="right:1.9px">338598366.77</span></div><div class="c" style="left:874.9px;top:469.95px;width:54.7px"><span style="left:1px;letter-spacing:0.05px">&quot;20220721121</span></div><div class="c" style="left:930.1px;top:469.95px;width:48.1px"><span style="left:1.4px;transform:scaleX(0.85)">BC002125,TM</span></div><div class="c" style="left:978.7px;top:469.95px;width:41.9px"><span style="left:2.2px;transform:scaleX(0.87)">TM000000</span></div><div class="c" style="left:1021.1px;top:469.95px;width:6.5px"><span style="left:1.4px">R</span></div><div class="c" style="left:62.5px;top:483.02px;width:244px"><span style="left:1.4px;transform:scaleX(0.889)">249385938291233455345500008583862120220720113844</span></div><div class="c" style="left:307px;top:483.02px;width:92.2px"><span class="r" style="right:1.3px;transform:scaleX(0.919)">07/21/2022 02:38:45</span></div><div class="c" style="left:399.7px;top:483.02px;width:45.3px"><span style="left:1.3px">748919241</span></div><div class="c" style="left:445.5px;top:483.02px;width:45.5px"><span style="left:1.3px">0907063156</span></div><div class="c" style="left:491.5px;top:483.02px;width:54.3px"><span style="left:1.4px;transform:scaleX(0.967)">transfer</span></div><div class="c" style="left:546.3px;top:483.02px;width:68.2px"><span style="left:1.4px;transform:scaleX(0.84)">WEB</span></div><div class="c" style="left:615px;top:483.02px;width:41.4px"><span style="left:1.4px;transform:scaleX(0.82)">COMPLETED</span></div><div class="c" style="left:656.9px;top:483.02px;width:42.8px"><span style="left:1.4px;transform:scaleX(0.957)">fis_mc_eco</span></div><div class="c" style="left:700.2px;top:483.02px;width:48.3px"><span class="r" style="right:1.3px">56.45</span></div><div class="c" style="left:749px;top:483.02px;width:62.6px"><span class="r" style="right:1.8px">338644469.39</span></div><div class="c" style="left:812.1px;top:483.02px;width:62.3px"><span class="r" style="right:1.9px">338644525.84</span></div><div class="c" style="left:874.9px;top:483.02px;width:54.7px"><span style="left:1px;letter-spacing:0.05px">&quot;20220721121</span></div><div class="c" style="left:930.1px;top:483.02px;width:48.1px"><span style="left:1.4px;transform:scaleX(0.85)">BC004092,TM</span></div><div class="c" style="left:978.7px;top:483.02px;width:41.9px"><span style="left:2.2px;transform:scaleX(0.87)">TM000000</span></div><div class="c" style="left:1021.1px;top:483.02px;width:6.5px"><span style="left:1.4px">R</span></div><div class="c" style="left:37px;top:143.2px;width:24.5px"><span class="r" style="right:0.8px;color:#444">21404</span></div><div class="c" style="left:37px;top:156.27px;width:24.5px"><span class="r" style="right:0.8px;color:#444">21405</span></div><div class="c" style="left:37px;top:169.34px;width:24.5px"><span class="r" style="right:0.8px;color:#444">21406</span></div><div class="c" style="left:37px;top:182.41px;width:24.5px"><span class="r" style="right:0.8px;color:#444">21407</span></div><div class="c" style="left:37px;top:195.48px;width:24.5px"><span class="r" style="right:0.8px;color:#444">21408</span></div><div class="c" style="left:37px;top:208.55px;width:24.5px"><span class="r" style="right:0.8px;color:#444">21409</span></div><div class="c" style="left:37px;top:221.62px;width:24.5px"><span class="r" style="right:0.8px;color:#444">21410</span></div><div class="c" style="left:37px;top:234.69px;width:24.5px"><span class="r" style="right:0.8px;color:#444">21411</span></div><div class="c" style="left:37px;top:247.76px;width:24.5px"><span class="r" style="right:0.8px;color:#444">21412</span></div><div class="c" style="left:37px;top:260.83px;width:24.5px"><span class="r" style="right:0.8px;color:#444">21413</span></div><div class="c" style="left:37px;top:273.9px;width:24.5px"><span class="r" style="right:0.8px;color:#444">21414</span></div><div class="a" style="left:37px;top:286.97px;width:25px;height:13.07px;background:#e1e1e1"></div><div class="a" style="left:61px;top:286.97px;width:1.5px;height:13.07px;background:#217346"></div><div class="c" style="left:37px;top:286.97px;width:24.5px"><span class="r" style="right:0.8px;color:#217346">21415</span></div><div class="c" style="left:37px;top:300.04px;width:24.5px"><span class="r" style="right:0.8px;color:#444">21416</span></div><div class="c" style="left:37px;top:313.11px;width:24.5px"><span class="r" style="right:0.8px;color:#444">21417</span></div><div class="c" style="left:37px;top:326.18px;width:24.5px"><span class="r" style="right:0.8px;color:#444">21418</span></div><div class="c" style="left:37px;top:339.25px;width:24.5px"><span class="r" style="right:0.8px;color:#444">21419</span></div><div class="c" style="left:37px;top:352.32px;width:24.5px"><span class="r" style="right:0.8px;color:#444">21420</span></div><div class="c" style="left:37px;top:365.39px;width:24.5px"><span class="r" style="right:0.8px;color:#444">21421</span></div><div class="c" style="left:37px;top:378.46px;width:24.5px"><span class="r" style="right:0.8px;color:#444">21422</span></div><div class="c" style="left:37px;top:391.53px;width:24.5px"><span class="r" style="right:0.8px;color:#444">21423</span></div><div class="c" style="left:37px;top:404.6px;width:24.5px"><span class="r" style="right:0.8px;color:#444">21424</span></div><div class="c" style="left:37px;top:417.67px;width:24.5px"><span class="r" style="right:0.8px;color:#444">21425</span></div><div class="c" style="left:37px;top:430.74px;width:24.5px"><span class="r" style="right:0.8px;color:#444">21426</span></div><div class="c" style="left:37px;top:443.81px;width:24.5px"><span class="r" style="right:0.8px;color:#444">21427</span></div><div class="c" style="left:37px;top:456.88px;width:24.5px"><span class="r" style="right:0.8px;color:#444">21428</span></div><div class="c" style="left:37px;top:469.95px;width:24.5px"><span class="r" style="right:0.8px;color:#444">21429</span></div><div class="c" style="left:37px;top:483.02px;width:24.5px"><span class="r" style="right:0.8px;color:#444">21430</span></div><svg class="a" style="left:0;top:0" width="1035" height="508"><path d="M62.6 143.8h3.6l-3.6 3z" fill="#1e7145"/><path d="M399.8 143.8h3.6l-3.6 3z" fill="#1e7145"/><path d="M445.6 143.8h3.6l-3.6 3z" fill="#1e7145"/><path d="M62.6 156.87h3.6l-3.6 3z" fill="#1e7145"/><path d="M399.8 156.87h3.6l-3.6 3z" fill="#1e7145"/><path d="M445.6 156.87h3.6l-3.6 3z" fill="#1e7145"/><path d="M62.6 169.94h3.6l-3.6 3z" fill="#1e7145"/><path d="M399.8 169.94h3.6l-3.6 3z" fill="#1e7145"/><path d="M445.6 169.94h3.6l-3.6 3z" fill="#1e7145"/><path d="M62.6 183.01h3.6l-3.6 3z" fill="#1e7145"/><path d="M399.8 183.01h3.6l-3.6 3z" fill="#1e7145"/><path d="M445.6 183.01h3.6l-3.6 3z" fill="#1e7145"/><path d="M62.6 196.08h3.6l-3.6 3z" fill="#1e7145"/><path d="M399.8 196.08h3.6l-3.6 3z" fill="#1e7145"/><path d="M445.6 196.08h3.6l-3.6 3z" fill="#1e7145"/><path d="M62.6 209.15h3.6l-3.6 3z" fill="#1e7145"/><path d="M399.8 209.15h3.6l-3.6 3z" fill="#1e7145"/><path d="M445.6 209.15h3.6l-3.6 3z" fill="#1e7145"/><path d="M62.6 222.22h3.6l-3.6 3z" fill="#1e7145"/><path d="M399.8 222.22h3.6l-3.6 3z" fill="#1e7145"/><path d="M445.6 222.22h3.6l-3.6 3z" fill="#1e7145"/><path d="M62.6 235.29h3.6l-3.6 3z" fill="#1e7145"/><path d="M399.8 235.29h3.6l-3.6 3z" fill="#1e7145"/><path d="M445.6 235.29h3.6l-3.6 3z" fill="#1e7145"/><path d="M62.6 248.36h3.6l-3.6 3z" fill="#1e7145"/><path d="M399.8 248.36h3.6l-3.6 3z" fill="#1e7145"/><path d="M445.6 248.36h3.6l-3.6 3z" fill="#1e7145"/><path d="M62.6 261.43h3.6l-3.6 3z" fill="#1e7145"/><path d="M399.8 261.43h3.6l-3.6 3z" fill="#1e7145"/><path d="M445.6 261.43h3.6l-3.6 3z" fill="#1e7145"/><path d="M62.6 274.5h3.6l-3.6 3z" fill="#1e7145"/><path d="M399.8 274.5h3.6l-3.6 3z" fill="#1e7145"/><path d="M445.6 274.5h3.6l-3.6 3z" fill="#1e7145"/><path d="M399.8 287.57h3.6l-3.6 3z" fill="#1e7145"/><path d="M445.6 287.57h3.6l-3.6 3z" fill="#1e7145"/><path d="M62.6 300.64h3.6l-3.6 3z" fill="#1e7145"/><path d="M399.8 300.64h3.6l-3.6 3z" fill="#1e7145"/><path d="M445.6 300.64h3.6l-3.6 3z" fill="#1e7145"/><path d="M62.6 313.71h3.6l-3.6 3z" fill="#1e7145"/><path d="M399.8 313.71h3.6l-3.6 3z" fill="#1e7145"/><path d="M445.6 313.71h3.6l-3.6 3z" fill="#1e7145"/><path d="M62.6 326.78h3.6l-3.6 3z" fill="#1e7145"/><path d="M399.8 326.78h3.6l-3.6 3z" fill="#1e7145"/><path d="M445.6 326.78h3.6l-3.6 3z" fill="#1e7145"/><path d="M62.6 339.85h3.6l-3.6 3z" fill="#1e7145"/><path d="M399.8 339.85h3.6l-3.6 3z" fill="#1e7145"/><path d="M445.6 339.85h3.6l-3.6 3z" fill="#1e7145"/><path d="M62.6 352.92h3.6l-3.6 3z" fill="#1e7145"/><path d="M399.8 352.92h3.6l-3.6 3z" fill="#1e7145"/><path d="M445.6 352.92h3.6l-3.6 3z" fill="#1e7145"/><path d="M62.6 365.99h3.6l-3.6 3z" fill="#1e7145"/><path d="M399.8 365.99h3.6l-3.6 3z" fill="#1e7145"/><path d="M445.6 365.99h3.6l-3.6 3z" fill="#1e7145"/><path d="M62.6 379.06h3.6l-3.6 3z" fill="#1e7145"/><path d="M399.8 379.06h3.6l-3.6 3z" fill="#1e7145"/><path d="M445.6 379.06h3.6l-3.6 3z" fill="#1e7145"/><path d="M62.6 392.13h3.6l-3.6 3z" fill="#1e7145"/><path d="M399.8 392.13h3.6l-3.6 3z" fill="#1e7145"/><path d="M445.6 392.13h3.6l-3.6 3z" fill="#1e7145"/><path d="M62.6 405.2h3.6l-3.6 3z" fill="#1e7145"/><path d="M399.8 405.2h3.6l-3.6 3z" fill="#1e7145"/><path d="M445.6 405.2h3.6l-3.6 3z" fill="#1e7145"/><path d="M62.6 418.27h3.6l-3.6 3z" fill="#1e7145"/><path d="M399.8 418.27h3.6l-3.6 3z" fill="#1e7145"/><path d="M445.6 418.27h3.6l-3.6 3z" fill="#1e7145"/><path d="M62.6 431.34h3.6l-3.6 3z" fill="#1e7145"/><path d="M399.8 431.34h3.6l-3.6 3z" fill="#1e7145"/><path d="M445.6 431.34h3.6l-3.6 3z" fill="#1e7145"/><path d="M62.6 444.41h3.6l-3.6 3z" fill="#1e7145"/><path d="M399.8 444.41h3.6l-3.6 3z" fill="#1e7145"/><path d="M445.6 444.41h3.6l-3.6 3z" fill="#1e7145"/><path d="M62.6 457.48h3.6l-3.6 3z" fill="#1e7145"/><path d="M399.8 457.48h3.6l-3.6 3z" fill="#1e7145"/><path d="M445.6 457.48h3.6l-3.6 3z" fill="#1e7145"/><path d="M62.6 470.55h3.6l-3.6 3z" fill="#1e7145"/><path d="M399.8 470.55h3.6l-3.6 3z" fill="#1e7145"/><path d="M445.6 470.55h3.6l-3.6 3z" fill="#1e7145"/><path d="M62.6 483.62h3.6l-3.6 3z" fill="#1e7145"/><path d="M399.8 483.62h3.6l-3.6 3z" fill="#1e7145"/><path d="M445.6 483.62h3.6l-3.6 3z" fill="#1e7145"/><path d="M62.6 496.69h3.6l-3.6 3z" fill="#1e7145"/><path d="M399.8 496.69h3.6l-3.6 3z" fill="#1e7145"/><path d="M445.6 496.69h3.6l-3.6 3z" fill="#1e7145"/></svg><div class="a" style="left:62.5px;top:117.4px;width:244px;height:11.6px;background:#dadada"></div><div class="a" style="left:62px;top:128.6px;width:244.5px;height:1.5px;background:#217346"></div><div class="t" style="left:181.52px;top:120.5px;font-size:8.2px;color:#2a6a45;font-weight:bold">A</div><div class="t" style="left:350.12px;top:120.5px;font-size:8.2px;color:#555;-webkit-text-stroke:0.1px #555">B</div><div class="t" style="left:419.14px;top:120.5px;font-size:8.2px;color:#555;-webkit-text-stroke:0.1px #555">C</div><div class="t" style="left:465.04px;top:120.5px;font-size:8.2px;color:#555;-webkit-text-stroke:0.1px #555">D</div><div class="t" style="left:515.67px;top:120.5px;font-size:8.2px;color:#555;-webkit-text-stroke:0.1px #555">E</div><div class="t" style="left:577.64px;top:120.5px;font-size:8.2px;color:#555;-webkit-text-stroke:0.1px #555">F</div><div class="t" style="left:632.26px;top:120.5px;font-size:8.2px;color:#555;-webkit-text-stroke:0.1px #555">G</div><div class="t" style="left:675.09px;top:120.5px;font-size:8.2px;color:#555;-webkit-text-stroke:0.1px #555">H</div><div class="t" style="left:722.96px;top:120.5px;font-size:8.2px;color:#555;-webkit-text-stroke:0.1px #555">I</div><div class="t" style="left:778px;top:120.5px;font-size:8.2px;color:#555;-webkit-text-stroke:0.1px #555">J</div><div class="t" style="left:840.27px;top:120.5px;font-size:8.2px;color:#555;-webkit-text-stroke:0.1px #555">K</div><div class="t" style="left:899.72px;top:120.5px;font-size:8.2px;color:#555;-webkit-text-stroke:0.1px #555">L</div><div class="t" style="left:950.48px;top:120.5px;font-size:8.2px;color:#555;-webkit-text-stroke:0.1px #555">M</div><div class="t" style="left:996.44px;top:120.5px;font-size:8.2px;color:#555;-webkit-text-stroke:0.1px #555">N</div><svg class="a" style="left:42px;top:120px" width="10" height="8"><path d="M9 0.5V7H1.5z" fill="#d6d6d6"/></svg><div class="t" style="left:48.8px;top:132.7px;font-size:9px;color:#333;transform:scaleX(0.639)">1</div><div class="t" style="left:64.3px;top:132.6px;font-size:8.6px;color:#000;font-weight:bold">merchantorderid</div><div class="t" style="left:308.3px;top:132.6px;font-size:8.6px;color:#000;font-weight:bold">date</div><div class="t" style="left:401px;top:132.6px;font-size:8.6px;color:#000;transform:scaleX(0.970);font-weight:bold">transid</div><div class="t" style="left:446.8px;top:132.6px;font-size:8.6px;color:#000;transform:scaleX(0.950);font-weight:bold">msisdn</div><div class="t" style="left:492.5px;top:132.6px;font-size:8.6px;color:#000;transform:scaleX(1.007);font-weight:bold">transtype</div><div class="t" style="left:547.8px;top:132.6px;font-size:8.6px;color:#000;transform:scaleX(0.975);font-weight:bold">transchannel</div><div class="t" style="left:616.2px;top:132.6px;font-size:8.6px;color:#000;transform:scaleX(0.986);font-weight:bold">state</div><div class="t" style="left:658.5px;top:132.6px;font-size:8.6px;color:#000;font-weight:bold">target</div><div class="t" style="left:701px;top:132.6px;font-size:8.6px;color:#000;font-weight:bold">amount</div><div class="t" style="left:750.8px;top:132.6px;font-size:8.6px;color:#000;transform:scaleX(0.988);font-weight:bold">prebal</div><div class="t" style="left:813.6px;top:132.6px;font-size:8.6px;color:#000;transform:scaleX(0.965);font-weight:bold">postbal</div><div class="t" style="left:876px;top:132.6px;font-size:8.6px;color:#000;transform:scaleX(0.957);font-weight:bold">long trans</div><div class="t" style="left:931.2px;top:132.6px;font-size:8.6px;color:#000;transform:scaleX(1.020);font-weight:bold">details</div><div class="t" style="left:980.5px;top:132.6px;font-size:8.6px;color:#000;transform:scaleX(1.224);font-weight:bold">TM</div><div class="a" style="left:1021px;top:130px;width:6.5px;height:13px;overflow:hidden"><div class="t" style="left:1px;top:2.6px;font-size:8.6px;color:#000;font-weight:bold">R</div></div><div class="a" style="left:296px;top:130.6px;width:9.4px;height:11px;border:1px solid #cacaca;box-sizing:border-box;background:#fff"></div><svg class="a" style="left:298.4px;top:135px" width="5" height="3"><path d="M0 0h4.6L2.3 2.8z" fill="#444"/></svg><div class="a" style="left:388.7px;top:130.6px;width:9.4px;height:11px;border:1px solid #cacaca;box-sizing:border-box;background:#fff"></div><svg class="a" style="left:391.1px;top:135px" width="5" height="3"><path d="M0 0h4.6L2.3 2.8z" fill="#444"/></svg><div class="a" style="left:434.5px;top:130.6px;width:9.4px;height:11px;border:1px solid #cacaca;box-sizing:border-box;background:#fff"></div><svg class="a" style="left:436.9px;top:135px" width="5" height="3"><path d="M0 0h4.6L2.3 2.8z" fill="#444"/></svg><div class="a" style="left:480.5px;top:130.6px;width:9.4px;height:11px;border:1px solid #cacaca;box-sizing:border-box;background:#fff"></div><svg class="a" style="left:482.9px;top:135px" width="5" height="3"><path d="M0 0h4.6L2.3 2.8z" fill="#444"/></svg><div class="a" style="left:535.3px;top:130.6px;width:9.4px;height:11px;border:1px solid #cacaca;box-sizing:border-box;background:#fff"></div><svg class="a" style="left:537.7px;top:135px" width="5" height="3"><path d="M0 0h4.6L2.3 2.8z" fill="#444"/></svg><div class="a" style="left:604px;top:130.6px;width:9.4px;height:11px;border:1px solid #cacaca;box-sizing:border-box;background:#fff"></div><svg class="a" style="left:606.4px;top:135px" width="5" height="3"><path d="M0 0h4.6L2.3 2.8z" fill="#444"/></svg><div class="a" style="left:645.9px;top:130.6px;width:9.4px;height:11px;border:1px solid #cacaca;box-sizing:border-box;background:#fff"></div><svg class="a" style="left:648.3px;top:135px" width="5" height="3"><path d="M0 0h4.6L2.3 2.8z" fill="#444"/></svg><div class="a" style="left:689.2px;top:130.6px;width:9.4px;height:11px;border:1px solid #cacaca;box-sizing:border-box;background:#fff"></div><svg class="a" style="left:691.6px;top:135px" width="5" height="3"><path d="M0 0h4.6L2.3 2.8z" fill="#444"/></svg><div class="a" style="left:738px;top:130.6px;width:9.4px;height:11px;border:1px solid #cacaca;box-sizing:border-box;background:#fff"></div><svg class="a" style="left:740.4px;top:135px" width="5" height="3"><path d="M0 0h4.6L2.3 2.8z" fill="#444"/></svg><div class="a" style="left:801.1px;top:130.6px;width:9.4px;height:11px;border:1px solid #cacaca;box-sizing:border-box;background:#fff"></div><svg class="a" style="left:803.5px;top:135px" width="5" height="3"><path d="M0 0h4.6L2.3 2.8z" fill="#444"/></svg><div class="a" style="left:863.9px;top:130.6px;width:9.4px;height:11px;border:1px solid #cacaca;box-sizing:border-box;background:#fff"></div><svg class="a" style="left:866.3px;top:135px" width="5" height="3"><path d="M0 0h4.6L2.3 2.8z" fill="#444"/></svg><div class="a" style="left:919.1px;top:130.6px;width:9.4px;height:11px;border:1px solid #cacaca;box-sizing:border-box;background:#fff"></div><svg class="a" style="left:921.5px;top:135px" width="5" height="3"><path d="M0 0h4.6L2.3 2.8z" fill="#444"/></svg><div class="a" style="left:967.7px;top:130.6px;width:9.4px;height:11px;border:1px solid #cacaca;box-sizing:border-box;background:#fff"></div><svg class="a" style="left:970.1px;top:135px" width="5" height="3"><path d="M0 0h4.6L2.3 2.8z" fill="#444"/></svg><div class="a" style="left:1010.1px;top:130.6px;width:9.4px;height:11px;border:1px solid #cacaca;box-sizing:border-box;background:#fff"></div><svg class="a" style="left:1012.5px;top:135px" width="5" height="3"><path d="M0 0h4.6L2.3 2.8z" fill="#444"/></svg><div class="a" style="left:61.8px;top:285.8px;width:245.2px;height:15px;border:1.6px solid #217346;box-sizing:border-box"></div><div class="a" style="left:304.8px;top:298.8px;width:3.6px;height:3.6px;background:#217346;border:0.5px solid #fff"></div><div class="a" style="left:41.3px;top:282.3px;width:172px;height:20px;border:2.4px solid #c9252c;box-sizing:border-box"></div><div class="a" style="left:37px;top:500.4px;width:998px;height:8px;background:#f0f0f0;border-top:1px solid #c6c6c6;box-sizing:border-box"></div><div class="a" style="left:102.7px;top:501px;width:1px;height:7px;background:#bdbdbd"></div><div class="a" style="left:310px;top:501px;width:1px;height:7px;background:#bdbdbd"></div><div class="a" style="left:360px;top:501px;width:1px;height:7px;background:#bdbdbd"></div><div class="a" style="left:407.6px;top:501px;width:1px;height:7px;background:#bdbdbd"></div><div class="a" style="left:455px;top:501px;width:1px;height:7px;background:#bdbdbd"></div><div class="a" style="left:408px;top:500.4px;width:47px;height:8px;background:#fff"></div><div class="a" style="left:408px;top:500.4px;width:47px;height:1.2px;background:#fff"></div><div class="t" style="left:111.5px;top:503.9px;font-size:8px;color:#444;transform:scaleX(1.043)">Summary</div><div class="t" style="left:163.6px;top:503.9px;font-size:8px;color:#444;transform:scaleX(1.042)">Reversal</div><div class="t" style="left:214.8px;top:503.9px;font-size:8px;color:#444;transform:scaleX(1.065)">Adjustment</div><div class="t" style="left:276.7px;top:503.9px;font-size:8px;color:#444;transform:scaleX(1.071)">Partial</div><div class="t" style="left:318.3px;top:503.9px;font-size:8px;color:#444;transform:scaleX(1.059)">Matched</div><div class="t" style="left:369.3px;top:503.9px;font-size:8px;color:#444;transform:scaleX(0.980)">No Auth</div><div class="t" style="left:414.6px;top:503.9px;font-size:8px;color:#217346;transform:scaleX(1.064);font-weight:bold">Transfer</div><svg class="a" style="left:476px;top:502px" width="12" height="6"><circle cx="6" cy="6" r="4.5" fill="none" stroke="#777" stroke-width="0.9"/><path d="M6 3.5v3M4.5 5h3" stroke="#777" stroke-width="0.9"/></svg><div class="a" style="left:640px;top:503px;width:1px;height:5px;border-left:1px dotted #888"></div><div class="a" style="left:650px;top:503.5px;width:98px;height:5px;border:1px solid #c6c6c6;border-bottom:0;background:#fff;box-sizing:border-box"></div><div class="a" style="left:1015.5px;top:503.5px;width:9.5px;height:5px;border:1px solid #c6c6c6;border-bottom:0;background:#fff;box-sizing:border-box"></div><div class="a" style="left:1027.6px;top:117px;width:7.4px;height:383.4px;background:#f0f0f0;border-left:1px solid #dcdcdc;box-sizing:border-box"></div><div class="a" style="left:1029.5px;top:118.8px;width:6px;height:9px;border:1px solid #c3c3c3;background:#fff;box-sizing:border-box"></div><svg class="a" style="left:1031px;top:121.5px" width="4" height="3"><path d="M0 2.6L2 0.3L4 2.6z" fill="#555"/></svg><div class="a" style="left:1030px;top:447px;width:5px;height:11px;border:1px solid #c3c3c3;background:#fff;box-sizing:border-box"></div><div class="a" style="left:1029.5px;top:490px;width:6px;height:9px;border:1px solid #c3c3c3;background:#fff;box-sizing:border-box"></div><svg class="a" style="left:1031px;top:493px" width="4" height="3"><path d="M0 0.3L2 2.6L4 0.3z" fill="#555"/></svg><div class="a" style="left:37px;top:86px;width:998px;height:2px;background:#dadada"></div><div class="a" style="left:40.3px;top:94px;width:66.2px;height:16.7px;border:1px solid #c6c6c6;box-sizing:border-box;background:#fff"></div><div class="t" style="left:44.8px;top:98.7px;font-size:9px;color:#333;transform:scaleX(0.915)">A21415</div><svg class="a" style="left:97px;top:100px" width="5" height="3"><path d="M0 0h5L2.5 3z" fill="#444"/></svg><svg class="a" style="left:114px;top:96px" width="4" height="12"><circle cx="2" cy="3" r="0.7" fill="#888"/><circle cx="2" cy="6" r="0.7" fill="#888"/><circle cx="2" cy="9" r="0.7" fill="#888"/></svg><div class="a" style="left:126.4px;top:94px;width:71px;height:16.7px;border:1px solid #c6c6c6;box-sizing:border-box;background:#fff"></div><svg class="a" style="left:126px;top:94px" width="72" height="17"><path d="M8 4L17 13M17 4L8 13" stroke="#b4b4b4" stroke-width="1.1" fill="none"/><path d="M30 9L33.5 12.5L41 4.5" stroke="#b4b4b4" stroke-width="1.4" fill="none"/></svg><div class="t" style="left:179px;top:94.5px;font-size:14px;font-family:'Liberation Serif',serif;font-style:italic;color:#555">f<span style="font-size:12.5px;margin-left:-0.3px">x</span></div><div class="a" style="left:200.3px;top:94px;width:835px;height:16.7px;border:1px solid #c6c6c6;border-right:0;box-sizing:border-box;background:#fff"></div><div class="t" style="left:208.6px;top:99px;font-size:9.2px;color:#333;transform:scaleX(0.893);white-space:pre">BENHAVN K  DK,NTMC</div><svg class="a" style="left:1026px;top:100px" width="9" height="6"><path d="M0.8 0.8L4.5 4.5L8.2 0.8" stroke="#444" stroke-width="1.6" fill="none"/></svg><svg class="a" style="left:690px;top:0" width="345" height="26"><defs><linearGradient id="gp" x1="0" x2="1"><stop offset="0" stop-color="#fff"/><stop offset="0.1" stop-color="#f0f0f0"/><stop offset="0.8" stop-color="#f1f1f1"/><stop offset="1" stop-color="#fff"/></linearGradient></defs><rect x="20" y="0" width="255" height="26" fill="url(#gp)"/><ellipse cx="118" cy="8" rx="16" ry="10" fill="#fcfcfc"/><ellipse cx="60" cy="14" rx="22" ry="6" fill="#f9f9f9"/><ellipse cx="222" cy="6" rx="20" ry="7" fill="#f9f9f9"/><path d="M130 26C160 17 200 15 232 18C248 19 258 16 266 12V26z" fill="#f6f6f6"/></svg><div class="t" style="left:455px;top:-2.3px;font-size:8.4px;color:#444;transform:scaleX(0.878)">Mastercard Detailed Recon_07212022.xlsx - Excel</div><svg class="a" style="left:42px;top:0" width="100" height="8"><rect x="5" y="-2" width="6" height="7.5" fill="#fff" stroke="#1e7145" stroke-width="0.8"/><path d="M7 1h3M7 3h3" stroke="#1e7145" stroke-width="0.7"/><path d="M0.8 -1L7 -2V6L0.8 5z" fill="#1e7145"/><path d="M2.3 0.5L4.8 4M4.8 0.5L2.3 4" stroke="#fff" stroke-width="0.8"/><rect x="21.6" y="-3" width="8.4" height="8" rx="0.6" fill="#fff" stroke="#7e3b9c" stroke-width="1.3"/><rect x="21.6" y="-3" width="8.4" height="3" fill="#7e3b9c"/><rect x="24" y="2.3" width="3.8" height="2.6" fill="#7e3b9c"/><rect x="24.8" y="3" width="1.2" height="1.4" fill="#fff"/><path d="M43 0.5C46 -1 50 0 50 2.5C50 4.5 48 5.5 45.5 5" stroke="#3d5f8c" stroke-width="1.3" fill="none"/><path d="M53.5 1h2.4L54.7 2.4z" fill="#444"/><path d="M74 0.5C71 -1 67 0 67 2.5C67 4.5 69 5.5 71.5 5" stroke="#c4c4c4" stroke-width="1.3" fill="none"/><path d="M80 1h2.4L81.2 2.4z" fill="#999"/><path d="M93 2.5h2.4L94.2 4z" fill="#444"/><rect x="93" y="0" width="2.4" height="0.8" fill="#444"/></svg><svg class="a" style="left:950px;top:0" width="85" height="10"><path d="M4.5 -0.5C6 -0.5 7 0.5 6.2 1.8C5.6 2.6 5 2.8 5 3.6" stroke="#555" stroke-width="1" fill="none"/><circle cx="5" cy="4.6" r="0.6" fill="#555"/><rect x="20.5" y="-2" width="8.5" height="6" fill="none" stroke="#666" stroke-width="0.9"/><path d="M24.7 0.5v2.5M23.5 1.8l1.2 -1.2l1.2 1.2" stroke="#666" stroke-width="0.7" fill="none"/><rect x="40" y="1.8" width="6" height="1.2" fill="#555"/><rect x="59.5" y="-1" width="7" height="5" fill="none" stroke="#666" stroke-width="0.9"/><path d="M79 -2L85 4M85 -2L79 4" stroke="#555" stroke-width="1.1"/></svg><div class="a" style="left:37px;top:9.7px;width:38px;height:16.5px;background:#217346"></div><div class="t" style="left:49.3px;top:14px;font-size:8.4px;color:#fff;transform:scaleX(0.738)">FILE</div><div class="a" style="left:37px;top:25.8px;width:998px;height:1px;background:#d4d4d4"></div><div class="a" style="left:77.3px;top:10.3px;width:41.1px;height:16.5px;border:1px solid #d4d4d4;border-bottom:0;background:#fff;box-sizing:border-box"></div><div class="t" style="left:86.5px;top:13.9px;font-size:8.4px;color:#217346;transform:scaleX(0.881)">HOME</div><div class="t" style="left:128.4px;top:14px;font-size:8.4px;color:#444;transform:scaleX(0.754)">INSERT</div><div class="t" style="left:170.9px;top:14px;font-size:8.4px;color:#444;transform:scaleX(0.832)">PAGE LAYOUT</div><div class="t" style="left:238.5px;top:14px;font-size:8.4px;color:#444;transform:scaleX(0.846)">FORMULAS</div><div class="t" style="left:296.8px;top:14px;font-size:8.4px;color:#444;transform:scaleX(0.860)">DATA</div><div class="t" style="left:334.4px;top:14px;font-size:8.4px;color:#444;transform:scaleX(0.773)">REVIEW</div><div class="t" style="left:379.3px;top:14px;font-size:8.4px;color:#444;transform:scaleX(0.810)">VIEW</div><svg class="a" style="left:1010px;top:16px" width="5" height="3"><path d="M0 0h4L2 2.5z" fill="#444"/></svg><div class="a" style="left:1019px;top:10px;width:16px;height:16px;background:#b8b8b8;overflow:hidden"><svg width="16" height="16"><circle cx="8" cy="6" r="3.6" fill="#fff"/><path d="M1.5 16C1.5 11 4.5 9.5 8 9.5C11.5 9.5 14.5 11 14.5 16z" fill="#fff"/></svg></div><div class="a" style="left:0;top:0;width:37px;height:508px;background:#f6f6f6"></div><div class="a" style="left:0;top:104px;width:26px;height:404px;background:#f6f6f6"></div><div class="a" style="left:0;top:137px;width:26px;height:51px;background:#ebebeb"></div><svg class="a" style="left:0;top:225px" width="26" height="110"><path d="M0 10C8 14 16 20 21 30C24 40 26 60 26 70L26 110H0z" fill="#ececec"/><path d="M0 75H26V110H0z" fill="#f4f4f4"/></svg><div class="a" style="left:0;top:0;width:37px;height:40px;background:#161616"></div><div class="a" style="left:0;top:0;width:37px;height:13px;background:#080808"></div><div class="a" style="left:6.8px;top:0;width:1px;height:13px;background:#3a3a3a"></div><div class="a" style="left:0;top:13px;width:37px;height:3px;background:#4d4d4d"></div><svg class="a" style="left:0;top:0" width="37" height="40"><path d="M18 0.2L24.5 6.5M24.5 0.2L18 6.5" stroke="#bbb" stroke-width="0.8"/><circle cx="2" cy="27.6" r="7" fill="#2f6a22"/><circle cx="2" cy="27.6" r="5.8" fill="#4a8a38"/><path d="M3.2 24V28.8C3.2 30.3 2.2 30.9 0.8 30.6" stroke="#e6f0dc" stroke-width="1.4" fill="none"/><circle cx="22" cy="24.3" r="0.95" fill="#fff"/><circle cx="22" cy="27.8" r="0.95" fill="#fff"/><circle cx="22" cy="31" r="0.95" fill="#fff"/></svg><div class="a" style="left:0;top:40px;width:26px;height:31px;background:#3c3c3c"></div><div class="a" style="left:0;top:71px;width:26px;height:33px;background:#fff"></div><div class="a" style="left:0;top:103.5px;width:26px;height:1px;background:#e2e2e2"></div><div class="a" style="left:26px;top:40px;width:11px;height:468px;background:#f0f0f0;border-left:1px solid #e8e8e8;border-right:1.5px solid #f8f8f8;box-sizing:border-box"></div><svg class="a" style="left:28px;top:44px" width="7" height="4"><path d="M0.5 3.5L3.5 0.5L6.5 3.5z" fill="#333"/></svg><div class="a" style="left:27px;top:454.7px;width:8.5px;height:40.2px;background:#c2c2c2"></div><div class="a" style="left:139.2px;top:29px;width:1px;height:56px;background:#e2e2e2"></div><div class="a" style="left:274.4px;top:29px;width:1px;height:56px;background:#e2e2e2"></div><div class="a" style="left:448px;top:29px;width:1px;height:56px;background:#e2e2e2"></div><div class="a" style="left:539px;top:29px;width:1px;height:56px;background:#e2e2e2"></div><div class="a" style="left:657.4px;top:29px;width:1px;height:56px;background:#e2e2e2"></div><div class="a" style="left:746px;top:29px;width:1px;height:56px;background:#e2e2e2"></div><div class="a" style="left:869.5px;top:29px;width:1px;height:56px;background:#e2e2e2"></div><div class="a" style="left:925.5px;top:29px;width:1px;height:56px;background:#e2e2e2"></div><div class="t" style="left:66.3px;top:78px;font-size:8px;color:#555;transform:scaleX(0.955)">Clipboard</div><div class="t" style="left:194.7px;top:78px;font-size:8px;color:#555;transform:scaleX(0.956)">Font</div><div class="t" style="left:338.7px;top:78px;font-size:8px;color:#555;transform:scaleX(0.978)">Alignment</div><div class="t" style="left:474.8px;top:78px;font-size:8px;color:#555;transform:scaleX(0.945)">Number</div><div class="t" style="left:588.7px;top:78px;font-size:8px;color:#555;transform:scaleX(0.840)">Styles</div><div class="t" style="left:694px;top:78px;font-size:8px;color:#555;transform:scaleX(0.877)">Cells</div><div class="t" style="left:795.7px;top:78px;font-size:8px;color:#555;transform:scaleX(0.952)">Editing</div><div class="t" style="left:871.9px;top:78px;font-size:8px;color:#555;transform:scaleX(0.930)">Data Protection</div><svg class="a" style="left:0;top:0" width="1035" height="90"><path d="M132 84.2v-3.8h3.8" stroke="#999" stroke-width="0.8" fill="none"/><path d="M133.3 81.8l2.6 2.6v-2.2M135.9 84.4h-2.2" stroke="#444" stroke-width="0.9" fill="none"/><path d="M268 84.2v-3.8h3.8" stroke="#999" stroke-width="0.8" fill="none"/><path d="M269.3 81.8l2.6 2.6v-2.2M271.9 84.4h-2.2" stroke="#444" stroke-width="0.9" fill="none"/><path d="M441 84.2v-3.8h3.8" stroke="#999" stroke-width="0.8" fill="none"/><path d="M442.3 81.8l2.6 2.6v-2.2M444.9 84.4h-2.2" stroke="#444" stroke-width="0.9" fill="none"/><path d="M533 84.2v-3.8h3.8" stroke="#999" stroke-width="0.8" fill="none"/><path d="M534.3 81.8l2.6 2.6v-2.2M536.9 84.4h-2.2" stroke="#444" stroke-width="0.9" fill="none"/><path d="M1026 84.5L1029.5 81L1033 84.5" stroke="#555" stroke-width="1.2" fill="none"/></svg><svg class="a" style="left:0;top:0" width="1035" height="90"><rect x="45.3" y="33.5" width="14.5" height="16" rx="0.8" fill="#eec97c"/><rect x="48.8" y="33.8" width="8.2" height="1.8" rx="0.6" fill="#4a4a4a"/><path d="M51.3 34V33a1.6 1.4 0 0 1 3.2 0V34" stroke="#4a4a4a" stroke-width="1" fill="none"/><path d="M54.3 39.3h6.3l3.2 3.2v8.8h-9.5z" fill="#fff" stroke="#8a8a8a" stroke-width="0.8"/><path d="M50.4 67.1h4.2l-2.1 2.4z" fill="#555"/><path d="M71 31l6 6.5M77 31l-6 6.5" stroke="#555" stroke-width="0.9" fill="none"/><circle cx="71" cy="38.3" r="1.8" fill="none" stroke="#5a7fa8" stroke-width="0.9"/><circle cx="77" cy="38.3" r="1.8" fill="none" stroke="#5a7fa8" stroke-width="0.9"/><rect x="68.8" y="46.2" width="6" height="7" fill="#fff" stroke="#888" stroke-width="0.8"/><rect x="72.5" y="48.5" width="6.3" height="7" fill="#fff" stroke="#888" stroke-width="0.8"/><path d="M73.8 51h3.8M73.8 53h3.8" stroke="#aaa" stroke-width="0.6"/><path d="M105.4 50h4.2l-2.1 2.4z" fill="#555"/><path d="M70 67.5l4-4 2 2-4 4z" fill="#e7c98d"/><path d="M74.5 63l3-3 1.5 1.5-3 3z" fill="#444"/><circle cx="78.8" cy="60.8" r="0.8" fill="#444"/><rect x="142.8" y="33.7" width="72" height="14.6" fill="#fff" stroke="#c6c6c6" stroke-width="0.9"/><rect x="215.2" y="33.7" width="27.6" height="14.6" fill="#fff" stroke="#c6c6c6" stroke-width="0.9"/><path d="M207.9 40.1h4.2l-2.1 2.4z" fill="#444"/><path d="M236.2 40.1h4.2l-2.1 2.4z" fill="#444"/><path d="M254 38.2l1.2-1.2 1.2 1.2" stroke="#444" stroke-width="0.7" fill="none"/><path d="M268.3 36.2l1.2 1.2 1.2-1.2" stroke="#444" stroke-width="0.7" fill="none"/><path d="M187.4 60h4.2l-2.1 2.4z" fill="#555"/><rect x="196.4" y="54" width="0.8" height="13" fill="#e2e2e2"/><rect x="224" y="54" width="0.8" height="13" fill="#e2e2e2"/><rect x="202.3" y="56.2" width="8.4" height="8.2" fill="none" stroke="#aaa" stroke-width="0.8"/><path d="M206.5 56.2v8.2M202.3 60.3h8.4" stroke="#ccc" stroke-width="0.7"/><path d="M215.1 60h4.2l-2.1 2.4z" fill="#555"/><path d="M231 59.5l3.5-3.5 4 4-3.5 3.5z" fill="#fff" stroke="#666" stroke-width="0.8"/><path d="M238.5 60l1.3 2.4" stroke="#2e6bb3" stroke-width="1.2"/><rect x="229.2" y="63.8" width="10.8" height="2.2" fill="#eded2a"/><path d="M243.7 60h4.2l-2.1 2.4z" fill="#555"/><path d="M252.8 63l2.7-6.3 2.7 6.3M253.8 61h3.4" stroke="#444" stroke-width="0.9" fill="none"/><rect x="251.8" y="64" width="10" height="2.3" fill="#d9131b"/><path d="M265.7 60h4.2l-2.1 2.4z" fill="#555"/><rect x="280.5" y="35" width="9" height="0.9" fill="#9a9a9a"/><rect x="280.5" y="37.05" width="9" height="0.9" fill="#9a9a9a"/><rect x="280.5" y="39.1" width="9" height="0.9" fill="#9a9a9a"/><rect x="295" y="37.9" width="9" height="0.9" fill="#555"/><rect x="295" y="39.95" width="9" height="0.9" fill="#555"/><rect x="295" y="42" width="9" height="0.9" fill="#555"/><rect x="306.8" y="33.6" width="14.4" height="14.5" fill="#9ed6b4"/><rect x="309.5" y="41" width="9" height="0.9" fill="#5b7a66"/><rect x="309.5" y="43.05" width="9" height="0.9" fill="#5b7a66"/><rect x="309.5" y="45.1" width="9" height="0.9" fill="#5b7a66"/><rect x="324" y="33.5" width="0.8" height="14" fill="#e6e6e6"/><rect x="324" y="54" width="0.8" height="13" fill="#e6e6e6"/><text x="328.6" y="42.2" font-family="Liberation Sans" font-size="6.8" fill="#333" stroke="#333" stroke-width="0.25" transform="rotate(-45 331.5 40)">ab</text><path d="M333.5 45.5L340 39" stroke="#333" stroke-width="0.9"/><circle cx="340" cy="39" r="0.8" fill="#333"/><path d="M341.9 40h4.2l-2.1 2.4z" fill="#555"/><rect x="280.5" y="58" width="9" height="0.85" fill="#8a8a8a"/><rect x="280.5" y="60" width="6" height="0.85" fill="#8a8a8a"/><rect x="280.5" y="62" width="9" height="0.85" fill="#8a8a8a"/><rect x="280.5" y="64" width="6" height="0.85" fill="#8a8a8a"/><rect x="295" y="58" width="9" height="0.85" fill="#8a8a8a"/><rect x="296.5" y="60" width="6" height="0.85" fill="#8a8a8a"/><rect x="295" y="62" width="9" height="0.85" fill="#8a8a8a"/><rect x="296.5" y="64" width="6" height="0.85" fill="#8a8a8a"/><rect x="310" y="58" width="9" height="0.85" fill="#8a8a8a"/><rect x="313" y="60" width="6" height="0.85" fill="#8a8a8a"/><rect x="310" y="62" width="9" height="0.85" fill="#8a8a8a"/><rect x="313" y="64" width="6" height="0.85" fill="#8a8a8a"/><rect x="333.5" y="58" width="6" height="0.85" fill="#8a8a8a"/><rect x="333.5" y="60" width="6" height="0.85" fill="#8a8a8a"/><rect x="333.5" y="62" width="6" height="0.85" fill="#8a8a8a"/><rect x="333.5" y="64" width="6" height="0.85" fill="#8a8a8a"/><path d="M329 61.2h3.5M329 61.2l1.5-1.3M329 61.2l1.5 1.3" stroke="#2e6bb3" stroke-width="1" fill="none"/><rect x="348" y="58" width="6" height="0.85" fill="#8a8a8a"/><rect x="348" y="60" width="6" height="0.85" fill="#8a8a8a"/><rect x="348" y="62" width="6" height="0.85" fill="#8a8a8a"/><rect x="348" y="64" width="6" height="0.85" fill="#8a8a8a"/><path d="M343 61.2h3.5M346.5 61.2l-1.5-1.3M346.5 61.2l-1.5 1.3" stroke="#2e6bb3" stroke-width="1" fill="none"/><rect x="358.6" y="33" width="0.8" height="36" fill="#e2e2e2"/><rect x="363.5" y="35.5" width="9" height="9.5" fill="none" stroke="#888" stroke-width="0.8"/><rect x="365" y="37.8" width="6" height="0.9" fill="#999"/><rect x="365" y="39.8" width="6" height="0.9" fill="#999"/><rect x="365" y="41.8" width="6" height="0.9" fill="#999"/><path d="M371.5 40.5h2.5v2.5h-3" stroke="#2e6bb3" stroke-width="0.9" fill="none"/><rect x="363.5" y="55.5" width="10.5" height="10.5" fill="none" stroke="#777" stroke-width="0.8"/><path d="M363.5 58.5h10.5M363.5 63h10.5M366 60.7h5.5" stroke="#888" stroke-width="0.8"/><path d="M437.9 60.3h4.2l-2.1 2.4z" fill="#555"/><rect x="450.9" y="33.7" width="84.6" height="14.6" fill="#fff" stroke="#c6c6c6" stroke-width="0.9"/><path d="M529.4 40.1h4.2l-2.1 2.4z" fill="#444"/><rect x="452.8" y="56.2" width="9.6" height="5.2" fill="#fff" stroke="#2b4f7e" stroke-width="1.1"/><circle cx="457" cy="58.8" r="1.3" fill="#2e6bb3"/><rect x="455.5" y="62.3" width="6" height="3.5" fill="#ecd49b"/><path d="M466.4 60h4.2l-2.1 2.4z" fill="#555"/><rect x="504" y="54" width="0.8" height="13" fill="#e2e2e2"/><rect x="556.5" y="31.8" width="18.5" height="16" fill="#fff" stroke="#999" stroke-width="0.8"/><path d="M556.5 35.8h18.5M556.5 39.8h18.5M556.5 43.8h18.5M561.5 31.8v16M566.5 31.8v16M571 31.8v16" stroke="#d6d6d6" stroke-width="0.6"/><rect x="561.6" y="32.2" width="4.8" height="3.4" fill="#e0703a"/><rect x="561.6" y="36" width="8" height="3.6" fill="#3b76bd"/><rect x="561.6" y="40" width="4.8" height="3.6" fill="#e0703a"/><rect x="561.6" y="44" width="3" height="3.6" fill="#3b76bd"/><rect x="565.5" y="43" width="11" height="8.3" fill="#fff" stroke="#888" stroke-width="0.9"/><path d="M568.5 46h5M568.5 48.3h5M572.5 44.5l-3 5.3" stroke="#333" stroke-width="0.8"/><rect x="599" y="33" width="16.4" height="13.6" fill="#fff" stroke="#888" stroke-width="0.8"/><rect x="603" y="37" width="12.4" height="9.6" fill="#c5d7ea"/><path d="M599 36.8h16.4M599 40h16.4M599 43.2h16.4M603 33v13.6M607.5 33v13.6M611.5 33v13.6" stroke="#aaa" stroke-width="0.6"/><path d="M617.5 37l-8 8.5" stroke="#555" stroke-width="2.2"/><path d="M609.5 45c-2 0-4 2-5.5 6 4-1 6.5-2.5 7.5-4.5z" fill="#2e6bb3"/><rect x="632" y="33" width="16.4" height="13.6" fill="#fff" stroke="#888" stroke-width="0.8"/><rect x="635" y="36" width="10.4" height="7.6" fill="#b9d0ea" stroke="#999" stroke-width="0.5"/><path d="M650.5 37l-8 8.5" stroke="#555" stroke-width="2.2"/><path d="M642.5 45c-2 0-4 2-5.5 6 4-1 6.5-2.5 7.5-4.5z" fill="#2e6bb3"/><rect x="666" y="32" width="9.8" height="3" fill="#fff" stroke="#888" stroke-width="0.8"/><path d="M670.9 32v3" stroke="#aaa" stroke-width="0.6"/><path d="M667 39h4M667 39l1.6-1.4M667 39l1.6 1.4" stroke="#2e6bb3" stroke-width="0.9" fill="none"/><rect x="673" y="37.3" width="10" height="3.4" fill="#ddd" stroke="#888" stroke-width="0.8"/><rect x="666" y="42.5" width="10" height="6.5" fill="#fff" stroke="#888" stroke-width="0.8"/><path d="M666 45.7h10M671 42.5v6.5" stroke="#999" stroke-width="0.7"/><path d="M671.9 67.1h4.2l-2.1 2.4z" fill="#555"/><rect x="693" y="32" width="9.8" height="3" fill="#fff" stroke="#888" stroke-width="0.8"/><rect x="697" y="37.3" width="6" height="3.4" fill="#ddd" stroke="#888" stroke-width="0.8"/><rect x="693" y="42.5" width="10" height="6.5" fill="#fff" stroke="#888" stroke-width="0.8"/><path d="M693 45.7h10M698 42.5v6.5" stroke="#999" stroke-width="0.7"/><path d="M703.5 35.5l8.5 8.5M712 35.5l-8.5 8.5" stroke="#d04040" stroke-width="1"/><path d="M699.4 67.1h4.2l-2.1 2.4z" fill="#555"/><path d="M720.5 32.5h17M720.5 32.5l1.8-1.5M720.5 32.5l1.8 1.5M737.5 32.5l-1.8-1.5M737.5 32.5l-1.8 1.5M720.3 30.5v4M737.7 30.5v4" stroke="#2e6bb3" stroke-width="0.8" fill="none"/><rect x="720.5" y="35.3" width="18" height="13.5" fill="#fff" stroke="#888" stroke-width="0.8"/><path d="M720.5 38h18M720.5 45.5h18M725 35.3v13.5M729.5 35.3v13.5M734 35.3v13.5" stroke="#ccc" stroke-width="0.6"/><rect x="725.2" y="38.3" width="4.2" height="7" fill="#3b76bd"/><path d="M727.2 67.1h4.2l-2.1 2.4z" fill="#555"/><path d="M761 31.5h-8.8l4.5 4-4.5 4h8.8" stroke="#222" stroke-width="1.3" fill="none"/><path d="M802.7 35h4.2l-2.1 2.4z" fill="#555"/><rect x="752.5" y="45.8" width="8.5" height="9.6" fill="#fff" stroke="#777" stroke-width="0.8"/><rect x="752.5" y="45.8" width="8.5" height="1.6" fill="#777"/><path d="M756.8 48.3v5M754.8 51.5l2 2 2-2" stroke="#2e6bb3" stroke-width="1" fill="none"/><path d="M774.9 49.8h4.2l-2.1 2.4z" fill="#555"/><path d="M753 67.5l5.5-5.5 3 3-5.5 5.5z" fill="#e88a9a"/><path d="M752.5 70.5h8" stroke="#aaa" stroke-width="0.6"/><path d="M783.1 64.6h4.2l-2.1 2.4z" fill="#555"/><path d="M821.8 37h11.2l-4.3 4.6v5.6l-2.6-1.4v-4.2z" fill="#707070"/><path d="M843 48.2V41.5L844.6 36.2H849.6V48.2z M852.8 48.2V36.2H857.8L859.6 41.5V48.2z" fill="#5c5c5c"/><rect x="845.6" y="33.2" width="3.4" height="3.2" fill="#5c5c5c"/><rect x="853.6" y="33.2" width="3.4" height="3.2" fill="#5c5c5c"/><rect x="849.4" y="38.6" width="3.6" height="3.2" fill="#5c5c5c"/><path d="M843.6 42v6M859 42v6" stroke="#9a9a9a" stroke-width="0.8"/><path d="M887.6 31L896.7 36L905.8 31V46.2L896.7 51L887.6 46.2z" fill="#c4202a"/><path d="M896.7 36L905.8 31V46.2L896.7 51z" fill="#8e1018" opacity="0.45"/><path d="M891.2 36.8L896.7 39.8L902.2 36.8V45L896.7 48L891.2 45z" fill="#fff"/></svg><div class="t" style="left:43.9px;top:54.1px;font-size:8px;color:#444;transform:scaleX(0.885)">Paste</div><div class="t" style="left:81.3px;top:32.5px;font-size:8px;color:#444;transform:scaleX(0.964)">Cut</div><div class="t" style="left:81.3px;top:47.1px;font-size:8px;color:#444;transform:scaleX(0.953)">Copy</div><div class="t" style="left:81.3px;top:62.1px;font-size:8px;color:#444;transform:scaleX(0.951)">Format Painter</div><div class="t" style="left:145px;top:37.2px;font-size:8px;color:#444;transform:scaleX(0.966)">Calibri</div><div class="t" style="left:218.1px;top:37.2px;font-size:8px;color:#444;transform:scaleX(0.747)">11</div><div class="t" style="left:376px;top:37.9px;font-size:8px;color:#444;transform:scaleX(0.952)">Wrap Text</div><div class="t" style="left:376px;top:57.9px;font-size:8px;color:#444;transform:scaleX(0.986)">Merge &amp; Center</div><div class="t" style="left:453px;top:37.9px;font-size:8px;color:#444;transform:scaleX(1.091)">Text</div><div class="t" style="left:545.7px;top:54.5px;font-size:8px;color:#444;transform:scaleX(1.007)">Conditional</div><div class="t" style="left:544px;top:64.9px;font-size:8px;color:#444;transform:scaleX(0.994)">Formatting</div><div class="t" style="left:590.8px;top:54.5px;font-size:8px;color:#444;transform:scaleX(0.930)">Format as</div><div class="t" style="left:597px;top:64.9px;font-size:8px;color:#444;transform:scaleX(0.915)">Table</div><div class="t" style="left:634px;top:54.5px;font-size:8px;color:#444;transform:scaleX(0.943)">Cell</div><div class="t" style="left:628px;top:64.9px;font-size:8px;color:#444;transform:scaleX(0.895)">Styles</div><div class="t" style="left:664.7px;top:54.5px;font-size:8px;color:#444;transform:scaleX(0.940)">Insert</div><div class="t" style="left:690.8px;top:54.5px;font-size:8px;color:#444;transform:scaleX(0.917)">Delete</div><div class="t" style="left:716.9px;top:54.5px;font-size:8px;color:#444;transform:scaleX(0.979)">Format</div><div class="t" style="left:764.1px;top:32.4px;font-size:8px;color:#444;transform:scaleX(0.979)">AutoSum</div><div class="t" style="left:764px;top:47px;font-size:8px;color:#444;transform:scaleX(0.949)">Fill</div><div class="t" style="left:764px;top:61.8px;font-size:8px;color:#444;transform:scaleX(0.889)">Clear</div><div class="t" style="left:812.6px;top:54.7px;font-size:8px;color:#444;transform:scaleX(0.981)">Sort &amp;</div><div class="t" style="left:812px;top:64.9px;font-size:8px;color:#444;transform:scaleX(1.041)">Filter</div><div class="t" style="left:839.8px;top:54.7px;font-size:8px;color:#444;transform:scaleX(0.995)">Find &amp;</div><div class="t" style="left:838px;top:64.9px;font-size:8px;color:#444;transform:scaleX(0.967)">Select</div><div class="t" style="left:883.9px;top:54.1px;font-size:8px;color:#444;transform:scaleX(0.983)">Manual</div><div class="t" style="left:874px;top:64.6px;font-size:8px;color:#444;transform:scaleX(0.959)">Classification</div><svg class="a" style="left:0;top:0" width="1035" height="90"><path d="M583.6 67.8h4.2l-2.1 2.4z" fill="#555"/><path d="M615.9 67.8h4.2l-2.1 2.4z" fill="#555"/><path d="M648.9 67.8h4.2l-2.1 2.4z" fill="#555"/><path d="M830.9 67.8h4.2l-2.1 2.4z" fill="#555"/><path d="M859.9 67.8h4.2l-2.1 2.4z" fill="#555"/></svg><div class="t" style="left:146.6px;top:57px;font-size:8px;color:#333;transform:scaleX(0.935);font-weight:bold">B</div><div class="t" style="left:161px;top:56.5px;font-size:8.5px;font-family:'Liberation Serif',serif;font-style:italic;color:#444">I</div><div class="t" style="left:175.5px;top:57px;font-size:7.6px;color:#444;font-weight:bold">U</div><div class="a" style="left:175.3px;top:64.2px;width:6px;height:0.8px;background:#555"></div><div class="t" style="left:247.5px;top:37.2px;font-size:8.6px;color:#444;transform:scaleX(1.081)">A</div><div class="t" style="left:262.5px;top:38.7px;font-size:6.6px;color:#444;transform:scaleX(1.249)">A</div><div class="t" style="left:476.4px;top:56.4px;font-size:9.6px;color:#333;transform:scaleX(0.937)">%</div><div class="t" style="left:493.6px;top:50px;font-size:11px;font-weight:bold;color:#333">,</div><svg class="a" style="left:0;top:0" width="1035" height="90"><rect x="513.3" y="59.6" width="0.9" height="0.9" fill="#444"/><ellipse cx="517.6" cy="58.4" rx="1.25" ry="1.9" fill="none" stroke="#444" stroke-width="0.8"/><rect x="511" y="64.2" width="0.9" height="0.9" fill="#444"/><ellipse cx="514.2" cy="63" rx="1.25" ry="1.9" fill="none" stroke="#444" stroke-width="0.8"/><ellipse cx="517.6" cy="63" rx="1.25" ry="1.9" fill="none" stroke="#444" stroke-width="0.8"/><rect x="524.2" y="59.6" width="0.9" height="0.9" fill="#444"/><ellipse cx="527.4" cy="58.4" rx="1.25" ry="1.9" fill="none" stroke="#444" stroke-width="0.8"/><ellipse cx="530.9" cy="58.4" rx="1.25" ry="1.9" fill="none" stroke="#444" stroke-width="0.8"/><rect x="527.8" y="64.2" width="0.9" height="0.9" fill="#444"/><ellipse cx="531.2" cy="63" rx="1.25" ry="1.9" fill="none" stroke="#444" stroke-width="0.8"/></svg><svg class="a" style="left:0;top:0" width="1035" height="90"><path d="M509.5 58.5h3.5M509.5 58.5l1.3-1.1M509.5 58.5l1.3 1.1M523.5 63.3h3.5M527 63.3l-1.3-1.1M527 63.3l-1.3 1.1" stroke="#2e6bb3" stroke-width="0.9" fill="none"/></svg><div class="t" style="left:814px;top:31.9px;font-size:8.6px;color:#3a5f95;transform:scaleX(1.127);font-weight:bold">A</div><div class="t" style="left:814.2px;top:41.8px;font-size:8.4px;color:#7a4ea0;transform:scaleX(1.286)">Z</div></body></html>
